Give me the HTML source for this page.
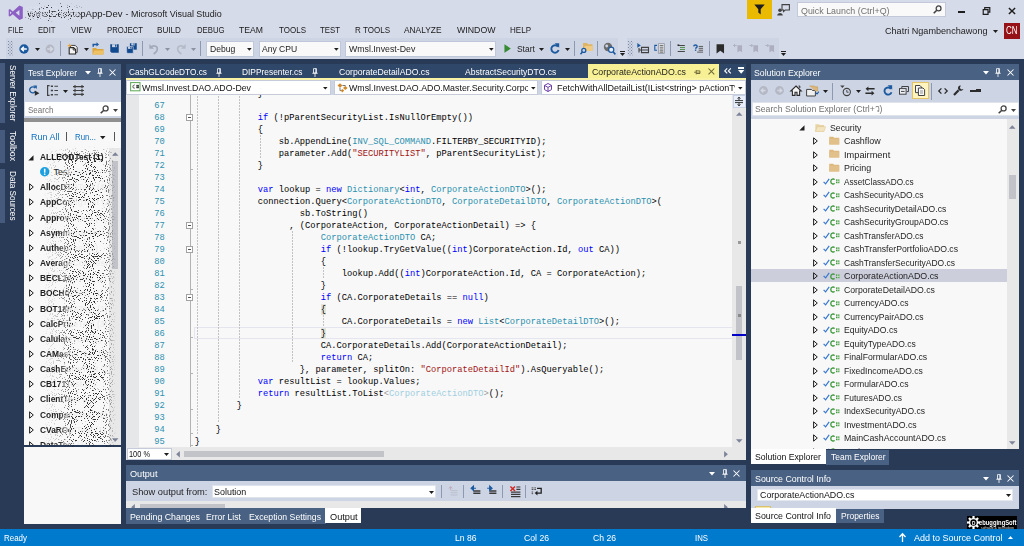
<!DOCTYPE html>
<html lang="en">
<head>
<meta charset="utf-8">
<title>WmslDesktopApp-Dev - Microsoft Visual Studio</title>
<style>
*{box-sizing:border-box;margin:0;padding:0}
html,body{width:1024px;height:546px;overflow:hidden}
body{position:relative;background:#293a57;font-family:"Liberation Sans",sans-serif;font-size:9px;color:#1e1e1e;line-height:1}
.abs{position:absolute}
svg{overflow:visible}
.t{position:absolute;white-space:pre;line-height:12px;height:12px;transform-origin:0 50%}
#top{left:0;top:0;width:1024px;height:59px;background:#d6dbe9}
#status{left:0;top:529px;width:1024px;height:17px;background:#007acc;color:#fff}
.grip{background-image:radial-gradient(circle at 0.6px 0.6px,#7c88a0 0.6px,transparent 0.7px),radial-gradient(circle at 0.6px 0.6px,#7c88a0 0.6px,transparent 0.7px);background-size:3px 3px,3px 3px;background-position:0 0,1.5px 1.5px}
.vt{position:absolute;writing-mode:vertical-rl;white-space:nowrap;color:#fff;font-size:9px;line-height:12px;width:12px;transform-origin:50% 0}
.hd{position:absolute;background:#496182;height:16px}
.tbar{position:absolute;background:#cdd4e4}
.pane{position:absolute;background:#f8f8f8}
.cl{position:absolute;left:0;white-space:pre;font-family:"Liberation Mono",monospace;font-size:8.75px;line-height:12px;height:12px;color:#000}
.k{color:#0000ff}.y{color:#2b91af}.s{color:#a31515}.f{color:#9a9a9a}.fy{color:#9fcfdf}
.ln{position:absolute;left:0;width:38.8px;text-align:right;font-family:"Liberation Mono",monospace;font-size:8.75px;line-height:12px;height:12px;color:#2b91af}
.ig{position:absolute;width:1px;background:repeating-linear-gradient(180deg,#c2c2c2 0,#c2c2c2 1.8px,transparent 1.8px,transparent 3px)}
.ob{position:absolute;width:7.4px;height:7px;border:1px solid #a2a2a2;background:#fff}
.ob:after{content:"";position:absolute;left:1px;top:2px;width:3px;height:1px;background:#555}
.cb{position:absolute;background:#fff;border:1px solid #c5cbd9;height:14.7px}
</style>
</head>
<body>
<div id="top" class="abs">
<div class="abs" style="left:6px;top:38px;width:786px;height:21px;background:#cdd4e4"></div>
<svg class="abs" style="left:8px;top:5px" width="16" height="16" viewBox="0 0 16 16"><path d="M11.4 0.6 L14.8 2 V13.6 L11.4 15 L4.8 9.2 L1.9 11.5 L0.7 10.9 V4.7 L1.9 4.1 L4.8 6.4 Z M11.4 4.9 L7.7 7.8 L11.4 10.7 Z M2 6.3 V9.3 L3.6 7.8 Z" fill="#8c5fc4" fill-rule="evenodd"/></svg>
<div class="t" style='left:27px;top:6.7px;line-height:14px;height:14px;font-size:9.6px;color:#1b1b1b;transform:scaleX(0.9896);'>WmslDesktopApp-Dev</div>
<div class="t" style='left:123.3px;top:6.7px;line-height:14px;height:14px;font-size:9.6px;color:#1b1b1b;transform:scaleX(0.9317);'> - Microsoft Visual Studio</div>
<svg class="abs" style="left:25px;top:3px" width="62" height="20" viewBox="0 0 62 20"><defs>
<filter id="nzl" x="0" y="0" width="100%" height="100%" color-interpolation-filters="sRGB"><feTurbulence type="fractalNoise" baseFrequency="0.9" numOctaves="1" seed="5"/><feColorMatrix values="0 0 0 0 0.86  0 0 0 0 0.88  0 0 0 0 0.93  0 0 0 -24 12.4"/></filter>
<filter id="nzd" x="0" y="0" width="100%" height="100%" color-interpolation-filters="sRGB"><feTurbulence type="fractalNoise" baseFrequency="0.9" numOctaves="1" seed="23"/><feColorMatrix values="0 0 0 0 0.15  0 0 0 0 0.15  0 0 0 0 0.2  0 0 0 -24 7.9"/></filter>
<radialGradient id="tmg" cx="0.42" cy="0.5" r="0.62"><stop offset="0" stop-color="#fff"/><stop offset="0.7" stop-color="#ccc"/><stop offset="1" stop-color="#000"/></radialGradient>
<mask id="tm"><rect width="62" height="20" fill="url(#tmg)"/></mask></defs>
<g mask="url(#tm)"><rect x="0" y="3" width="56" height="14" filter="url(#nzl)"/><rect width="62" height="20" filter="url(#nzd)"/></g></svg>
<div class="abs" style="left:747px;top:0;width:25px;height:19px;background:#e9ba00"></div>
<svg class="abs" style="left:754px;top:4px" width="11" height="11" viewBox="0 0 11 11"><path d="M0.3 0.5 H10.7 L6.7 5.2 V10.5 L4.3 8.6 V5.2 Z" fill="#1e1e1e"/></svg>
<svg class="abs" style="left:777px;top:4px" width="13" height="12" viewBox="0 0 13 12"><path d="M5 0.6 H12.4 V6 H8.2 L6.5 7.6 V6 H5 Z" fill="#d6dbe9" stroke="#424242" stroke-width="1.1"/><circle cx="3" cy="6.2" r="1.8" fill="#424242"/><path d="M0.2 11.6 C0.2 8.2 5.8 8.2 5.8 11.6 Z" fill="#424242"/></svg>
<div class="abs" style="left:796.5px;top:1.7px;width:149.5px;height:15.7px;background:#f9f9fa;border:1px solid #c3c9d8"></div>
<div class="t" style='left:801px;top:4.6px;color:#717171;transform:scaleX(0.9857);'>Quick Launch (Ctrl+Q)</div>
<svg class="abs" style="left:933px;top:5px" width="9" height="9" viewBox="0 0 10 10"><circle cx="6.2" cy="3.8" r="2.7" fill="none" stroke="#424242" stroke-width="1.4"/><path d="M4.2 5.8 L0.8 9.2" stroke="#424242" stroke-width="1.8"/></svg>
<div class="abs" style="left:957.5px;top:11.3px;width:7px;height:2px;background:#1e1e1e"></div>
<svg class="abs" style="left:982px;top:6.5px" width="9" height="8" viewBox="0 0 10 10"><path d="M2.8 2.6 V0.9 H9.1 V6.4 H7.3 M0.9 3.2 H6.9 V9.1 H0.9 Z" fill="none" stroke="#1e1e1e" stroke-width="1.5"/></svg>
<svg class="abs" style="left:1007.5px;top:7px" width="8" height="8" viewBox="0 0 9 9"><path d="M1 1 L8 8 M8 1 L1 8" stroke="#1e1e1e" stroke-width="1.6"/></svg>
<div class="t" style='left:8px;top:24.2px;font-size:9.2px;color:#1b1b1b;transform:scaleX(0.7987);'>FILE</div>
<div class="t" style='left:38px;top:24.2px;font-size:9.2px;color:#1b1b1b;transform:scaleX(0.8358);'>EDIT</div>
<div class="t" style='left:71px;top:24.2px;font-size:9.2px;color:#1b1b1b;transform:scaleX(0.8729);'>VIEW</div>
<div class="t" style='left:106.5px;top:24.2px;font-size:9.2px;color:#1b1b1b;transform:scaleX(0.8393);'>PROJECT</div>
<div class="t" style='left:157px;top:24.2px;font-size:9.2px;color:#1b1b1b;transform:scaleX(0.8868);'>BUILD</div>
<div class="t" style='left:196.5px;top:24.2px;font-size:9.2px;color:#1b1b1b;transform:scaleX(0.8413);'>DEBUG</div>
<div class="t" style='left:239px;top:24.2px;font-size:9.2px;color:#1b1b1b;transform:scaleX(0.9400);'>TEAM</div>
<div class="t" style='left:278.5px;top:24.2px;font-size:9.2px;color:#1b1b1b;transform:scaleX(0.8714);'>TOOLS</div>
<div class="t" style='left:320px;top:24.2px;font-size:9.2px;color:#1b1b1b;transform:scaleX(0.8516);'>TEST</div>
<div class="t" style='left:354.5px;top:24.2px;font-size:9.2px;color:#1b1b1b;transform:scaleX(0.8750);'>R TOOLS</div>
<div class="t" style='left:404px;top:24.2px;font-size:9.2px;color:#1b1b1b;transform:scaleX(0.9105);'>ANALYZE</div>
<div class="t" style='left:456.5px;top:24.2px;font-size:9.2px;color:#1b1b1b;transform:scaleX(0.9550);'>WINDOW</div>
<div class="t" style='left:510px;top:24.2px;font-size:9.2px;color:#1b1b1b;transform:scaleX(0.8744);'>HELP</div>
<div class="t" style='left:884.5px;top:25px;transform:scaleX(1.0092);'>Chatri Ngambenchawong</div>
<svg class="abs" style="left:993px;top:30px" width="5" height="3" viewBox="0 0 5 3"><path d="M0 0 H5 L2.5 3 Z" fill="#1e1e1e"/></svg>
<div class="abs" style="left:1004px;top:23px;width:16px;height:16px;background:#951216"></div>
<div class="t" style='left:1006px;top:25px;font-size:10px;color:#fff;transform:scaleX(0.7957);'>CN</div>
<div class="abs grip" style="left:8.2px;top:41px;width:4.5px;height:15px"></div>
<svg class="abs" style="left:19px;top:43.5px" width="10" height="10" viewBox="0 0 10 10"><circle cx="5" cy="5" r="4.7" fill="#1c5aa0"/><path d="M7.8 5 H3 M4.9 2.7 L2.5 5 L4.9 7.3" stroke="#fff" stroke-width="1.5" fill="none"/></svg>
<svg class="abs" style="left:34.5px;top:47.5px" width="5" height="3" viewBox="0 0 5 3"><path d="M0 0 H5 L2.5 3 Z" fill="#1e1e1e"/></svg>
<svg class="abs" style="left:44.5px;top:43.5px" width="10" height="10" viewBox="0 0 10 10"><circle cx="5" cy="5" r="4.4" fill="#b4b8c4"/><path d="M2.2 5 H7 M5.1 2.7 L7.5 5 L5.1 7.3" stroke="#d3d8e4" stroke-width="1.5" fill="none"/></svg>
<div class="abs" style="left:60px;top:41px;width:1px;height:15px;background:#8d99b0"></div>
<svg class="abs" style="left:67px;top:42.5px" width="11" height="12" viewBox="0 0 11 12"><path d="M3.6 2.4 H8.2 L10.2 4.4 V9.4 H3.6 Z" fill="#f4f4f4" stroke="#424242" stroke-width="1"/><path d="M2.2 4.6 H6.6 L8.6 6.6 V11 H2.2 Z" fill="#f4f4f4" stroke="#2b2b2b" stroke-width="1.1"/><path d="M6.2 4.6 V7 H8.6" fill="none" stroke="#2b2b2b" stroke-width="0.9"/><path d="M2.5 0.2 L3.2 1.9 L5 2.5 L3.2 3.2 L2.5 5 L1.9 3.2 L0 2.5 L1.9 1.9 Z" fill="#e9a53a"/></svg>
<svg class="abs" style="left:83.5px;top:47.5px" width="5" height="3" viewBox="0 0 5 3"><path d="M0 0 H5 L2.5 3 Z" fill="#1e1e1e"/></svg>
<svg class="abs" style="left:92px;top:41.5px" width="12" height="13" viewBox="0 0 12 13"><path d="M0.5 6 H4 L5 7 H11.5 V12.5 H0.5 Z" fill="#dda63c"/><path d="M2.4 8.4 H11.8 L10.6 12.5 H0.5 Z" fill="#efc165"/><path d="M1.2 4.8 V2.4 H5.2" fill="none" stroke="#1c5aa0" stroke-width="1.5"/><path d="M4.5 0.3 L7 2.4 L4.5 4.5 Z" fill="#1c5aa0"/></svg>
<svg class="abs" style="left:110.2px;top:44px" width="9" height="9" viewBox="0 0 10 10"><path d="M0.3 0.3 H9.7 V9.7 H1.8 L0.3 8.2 Z" fill="#114a8e"/><rect x="2.3" y="0.3" width="5.2" height="3.2" fill="#cdd4e4"/><rect x="5.6" y="0.8" width="1.2" height="2.2" fill="#114a8e"/></svg>
<svg class="abs" style="left:125.8px;top:43px" width="11.4" height="10.6" viewBox="0 0 13 13"><path d="M4.3 0.3 H12.7 V8.2 H4.3 Z" fill="#114a8e"/><rect x="6" y="0.3" width="4.6" height="2.6" fill="#cdd4e4"/><rect x="8.8" y="0.6" width="1.1" height="1.9" fill="#114a8e"/><path d="M0.3 4.4 H8.4 V12.7 H1.6 L0.3 11.4 Z" fill="#114a8e" stroke="#cdd4e4" stroke-width="0.8"/><rect x="2" y="4.6" width="4.4" height="2.6" fill="#cdd4e4"/><rect x="4.7" y="4.9" width="1.1" height="1.9" fill="#114a8e"/></svg>
<div class="abs" style="left:142px;top:41px;width:1px;height:15px;background:#8d99b0"></div>
<svg class="abs" style="left:149px;top:42.5px" width="10" height="12" viewBox="0 0 10 12"><path d="M1.5 4.6 C4 1.8 8.6 2.6 8.3 6.2 C8.1 8.3 6.6 9.8 4.6 11" fill="none" stroke="#a3a9b8" stroke-width="1.6"/><path d="M0.4 1 V5.8 H5 Z" fill="#a3a9b8"/></svg>
<svg class="abs" style="left:164.5px;top:47.5px" width="5" height="3" viewBox="0 0 5 3"><path d="M0 0 H5 L2.5 3 Z" fill="#8b91a0"/></svg>
<svg class="abs" style="left:176px;top:42.5px" width="10" height="12" viewBox="0 0 10 12"><path d="M8.5 4.6 C6 1.8 1.4 2.6 1.7 6.2 C1.9 8.3 3.4 9.8 5.4 11" fill="none" stroke="#b5bac7" stroke-width="1.6"/><path d="M9.6 1 V5.8 H5 Z" fill="#b5bac7"/></svg>
<svg class="abs" style="left:191px;top:47.5px" width="5" height="3" viewBox="0 0 5 3"><path d="M0 0 H5 L2.5 3 Z" fill="#8b91a0"/></svg>
<div class="abs" style="left:200px;top:41px;width:1px;height:15px;background:#8d99b0"></div>
<div class="abs" style="left:206.2px;top:40.5px;width:48.2px;height:16px;background:#f9f9fa;border:0.8px solid #bfc8db"></div>
<div class="t" style='left:209.7px;top:42.9px;transform:scaleX(0.9536);'>Debug</div>
<svg class="abs" style="left:247.2px;top:47.9px" width="4.7" height="2.7" viewBox="0 0 4.7 2.7"><path d="M0 0 H4.7 L2.35 2.7 Z" fill="#1e1e1e"/></svg>
<div class="abs" style="left:258.6px;top:40.5px;width:82.6px;height:16px;background:#f9f9fa;border:0.8px solid #bfc8db"></div>
<div class="t" style='left:262.3px;top:42.9px;transform:scaleX(0.9509);'>Any CPU</div>
<svg class="abs" style="left:334.00000000000006px;top:47.9px" width="4.7" height="2.7" viewBox="0 0 4.7 2.7"><path d="M0 0 H4.7 L2.35 2.7 Z" fill="#1e1e1e"/></svg>
<div class="abs" style="left:345.2px;top:40.5px;width:151px;height:16px;background:#f9f9fa;border:0.8px solid #bfc8db"></div>
<div class="t" style='left:348.5px;top:42.9px;transform:scaleX(0.9748);'>Wmsl.Invest-Dev</div>
<svg class="abs" style="left:489.0px;top:47.9px" width="4.7" height="2.7" viewBox="0 0 4.7 2.7"><path d="M0 0 H4.7 L2.35 2.7 Z" fill="#1e1e1e"/></svg>
<svg class="abs" style="left:503.5px;top:44px" width="7.2" height="9.2" viewBox="0 0 8 10"><path d="M0.5 0.3 L7.6 5 L0.5 9.7 Z" fill="#368b33"/></svg>
<div class="t" style='left:517px;top:42.5px;transform:scaleX(0.9361);'>Start</div>
<svg class="abs" style="left:538.5px;top:47.5px" width="5" height="3" viewBox="0 0 5 3"><path d="M0 0 H5 L2.5 3 Z" fill="#1e1e1e"/></svg>
<svg class="abs" style="left:550px;top:42.5px" width="10" height="11" viewBox="0 0 10 11"><path d="M7.9 3.6 A3.7 3.7 0 1 0 8.6 7" fill="none" stroke="#1c5aa0" stroke-width="1.9"/><path d="M4.6 0.2 H9.2 V4.8 Z" fill="#1c5aa0"/></svg>
<svg class="abs" style="left:565px;top:47.5px" width="5" height="3" viewBox="0 0 5 3"><path d="M0 0 H5 L2.5 3 Z" fill="#1e1e1e"/></svg>
<div class="abs" style="left:574px;top:41px;width:1px;height:15px;background:#8d99b0"></div>
<svg class="abs" style="left:580px;top:42px" width="13" height="13" viewBox="0 0 13 13"><path d="M3 1 H7 L8 2.2 H12.5 V9 H3 Z" fill="#dfb462"/><path d="M4.6 4 H12.5 V9 H3 Z" fill="#efcb85"/><circle cx="3.8" cy="8.4" r="2" fill="#cdd4e4" stroke="#1c5aa0" stroke-width="1.3"/><path d="M2.4 9.9 L0.5 12.2" stroke="#1c5aa0" stroke-width="1.5"/></svg>
<div class="abs" style="left:597px;top:41px;width:1px;height:15px;background:#8d99b0"></div>
<svg class="abs" style="left:603px;top:42px" width="13" height="13" viewBox="0 0 13 13"><circle cx="5" cy="5" r="4.2" fill="#6b6b6b"/><circle cx="3.7" cy="4" r="1.4" fill="#cdd4e4"/><circle cx="8.2" cy="7.8" r="2.6" fill="#e8edf6" stroke="#1c5aa0" stroke-width="1.2"/><path d="M10 9.8 L12.4 12.4" stroke="#1c5aa0" stroke-width="1.6"/></svg>
<div class="abs" style="left:618px;top:38px;width:9px;height:21px;background:#d6dbe9"></div>
<div class="abs" style="left:620px;top:50.5px;width:5px;height:1px;background:#1e1e1e"></div>
<svg class="abs" style="left:620px;top:53px" width="5" height="3" viewBox="0 0 5 3"><path d="M0 0 H5 L2.5 3 Z" fill="#1e1e1e"/></svg>
<div class="abs grip" style="left:628.2px;top:41px;width:4.5px;height:15px"></div>
<svg class="abs" style="left:637px;top:43px" width="12" height="11" viewBox="0 0 12 11"><path d="M0.3 0 L3.8 2.4 L0.3 4.8 Z" fill="#1c5aa0"/><path d="M2 5 V9.5 M2 7 H11.5 M4.5 4.4 H11.5 V9.6 H4.5 Z" fill="none" stroke="#424242" stroke-width="1.1"/></svg>
<svg class="abs" style="left:654px;top:43px" width="11" height="11" viewBox="0 0 11 11"><path d="M4.4 0.6 H10.4 V10.4 H4.4 Z" fill="#eef1f7" stroke="#8a8f9c" stroke-width="0.8"/><path d="M5.6 2.4 H9.4 M5.6 4.2 H9.4 M5.6 6 H9.4 M5.6 7.8 H9.4 M5.6 9.2 H9.4" stroke="#6a6a6a" stroke-width="1"/><path d="M3 2.4 H0.8 V7.2 H3" fill="none" stroke="#1c5aa0" stroke-width="1.1"/></svg>
<div class="abs" style="left:669.5px;top:41px;width:1px;height:15px;background:#8d99b0"></div>
<svg class="abs" style="left:677.3px;top:44.6px" width="8.4" height="7.2" viewBox="0 0 9 8"><path d="M0.6 0.6 H8.6 M3.4 2.8 H8.6 M3.4 5 H8.6 M0.6 7.2 H8.6" stroke="#424242" stroke-width="1.1"/><path d="M3.4 2.8 H8.6 M3.4 5 H8.6" stroke="#5a9a58" stroke-width="1.1"/><path d="M0.4 0 H2.4" stroke="#1e1e1e" stroke-width="1.2"/></svg>
<svg class="abs" style="left:692.8px;top:44px" width="10.4" height="9" viewBox="0 0 12 10"><path d="M0.8 2.6 C1 0.4 4.8 0.4 4.8 2.6 C4.8 4 3 4 3 5.4" fill="none" stroke="#1c5aa0" stroke-width="1.5"/><rect x="2.2" y="6.2" width="1.6" height="1.5" fill="#1c5aa0"/><path d="M6.6 2.6 H11.6 M6.6 4.8 H11.6 M6.6 7 H11.6 M4.8 9.2 H11.6" stroke="#555" stroke-width="1.1"/></svg>
<div class="abs" style="left:708.5px;top:41px;width:1px;height:15px;background:#8d99b0"></div>
<svg class="abs" style="left:716px;top:43.6px" width="8.6" height="9.8" viewBox="0 0 9 11"><path d="M0.3 0.2 H8.7 V10.6 L4.5 7.6 L0.3 10.6 Z" fill="#2b2b2b"/></svg>
<svg class="abs" style="left:733.2px;top:43.4px" width="9.4" height="10" viewBox="0 0 11 11"><path d="M5.2 2.4 H10.6 V10.8 L7.9 8.6 L5.2 10.8 Z" fill="#adafc0"/><path d="M4.4 2.6 H0.8 M2.4 0.8 L0.6 2.6 L2.4 4.4" fill="none" stroke="#adafc0" stroke-width="1.1"/></svg>
<svg class="abs" style="left:749.2px;top:43.4px" width="9.4" height="10" viewBox="0 0 11 11"><path d="M5.2 2.4 H10.6 V10.8 L7.9 8.6 L5.2 10.8 Z" fill="#adafc0"/><path d="M0.4 2.6 H4.2 M2.6 0.8 L4.4 2.6 L2.6 4.4" fill="none" stroke="#adafc0" stroke-width="1.1"/></svg>
<svg class="abs" style="left:765.2px;top:43.4px" width="9.4" height="10" viewBox="0 0 11 11"><path d="M5.2 2.4 H10.6 V10.8 L7.9 8.6 L5.2 10.8 Z" fill="#adafc0"/><path d="M0.4 2.6 H4.2 M2.6 0.8 L4.4 2.6 L2.6 4.4" fill="none" stroke="#adafc0" stroke-width="1.1"/></svg>
<div class="abs" style="left:779px;top:38px;width:13px;height:21px;background:#d6dbe9"></div>
<div class="abs" style="left:781px;top:50.5px;width:5px;height:1px;background:#1e1e1e"></div>
<svg class="abs" style="left:781px;top:53px" width="5" height="3" viewBox="0 0 5 3"><path d="M0 0 H5 L2.5 3 Z" fill="#1e1e1e"/></svg>
</div>
<div class="abs" style="left:0;top:63px;width:4.5px;height:60px;background:#465a7d"></div>
<div class="abs" style="left:0;top:129.5px;width:4.5px;height:33.5px;background:#465a7d"></div>
<div class="abs" style="left:0;top:169px;width:4.5px;height:53.5px;background:#465a7d"></div>
<div class="vt" style="left:6.8px;top:64.8px;transform:scaleY(0.9035)">Server Explorer</div>
<div class="vt" style="left:6.8px;top:131.3px;transform:scaleY(0.9668)">Toolbox</div>
<div class="vt" style="left:6.8px;top:171.3px;transform:scaleY(0.9077)">Data Sources</div>
<div class="hd" style="left:24px;top:64px;width:97px"></div>
<div class="t" style='left:27.5px;top:66.6px;color:#fff;transform:scaleX(0.9328);'>Test Explorer</div>
<svg class="abs" style="left:84.5px;top:71.0px" width="6" height="3.5" viewBox="0 0 6 3.5"><path d="M0 0 H6 L3.0 3.5 Z" fill="#fff"/></svg>
<svg class="abs" style="left:97.0px;top:68.0px" width="6" height="9" viewBox="0 0 6 9"><path d="M1.5 0.6 H4.4 V5 H1.5 Z M0.3 5.3 H5.7 M3 5.3 V9" fill="none" stroke="#fff" stroke-width="0.8"/><path d="M3.9 0.6 V5" stroke="#fff" stroke-width="0.9"/></svg>
<svg class="abs" style="left:108.5px;top:69.0px" width="7" height="7" viewBox="0 0 7 7"><path d="M0.5 0.5 L6.5 6.5 M6.5 0.5 L0.5 6.5" stroke="#fff" stroke-width="1.05"/></svg>
<div class="tbar" style="left:24px;top:80px;width:97px;height:42px"></div>
<svg class="abs" style="left:29px;top:85px" width="11" height="11" viewBox="0 0 11 11"><path d="M6.2 3.2 A3 3 0 1 0 6.4 6.2" fill="none" stroke="#1c5aa0" stroke-width="1.35"/><path d="M4.2 0.4 H7.8 V4 Z" fill="#1c5aa0"/><path d="M5.8 5.6 L10.4 8.2 L5.8 10.8 Z" fill="#2b2b2b"/></svg>
<svg class="abs" style="left:47px;top:85px" width="11" height="11" viewBox="0 0 11 11"><path d="M2.6 0.6 H0.6 V10.4 H2.6" fill="none" stroke="#424242" stroke-width="1.2"/><path d="M3.8 1.2 H6 M3.8 5.5 H6 M3.8 9.8 H6" stroke="#424242" stroke-width="1.6"/><path d="M7.4 1.2 H11 M7.4 5.5 H11 M7.4 9.8 H11" stroke="#424242" stroke-width="1.1"/></svg>
<svg class="abs" style="left:62.5px;top:89.5px" width="5" height="3" viewBox="0 0 5 3"><path d="M0 0 H5 L2.5 3 Z" fill="#1e1e1e"/></svg>
<svg class="abs" style="left:72.5px;top:85px" width="11" height="11" viewBox="0 0 11 11"><path d="M0 1.6 H11 M0 5.5 H11 M0 9.4 H11" stroke="#424242" stroke-width="1.1"/><path d="M2 0 V3.2 M9 0 V3.2 M2 7.8 V11 M9 7.8 V11 M2 4 V7 M9 4 V7" stroke="#424242" stroke-width="1.2"/></svg>
<div class="abs" style="left:24.5px;top:102.3px;width:96px;height:13.8px;background:#fff"></div>
<div class="t" style='left:28px;top:103.7px;color:#717171;transform:scaleX(0.8938);'>Search</div>
<svg class="abs" style="left:100px;top:105px" width="9" height="9" viewBox="0 0 9 9"><circle cx="5.6" cy="3.4" r="2.5" fill="none" stroke="#424242" stroke-width="1.3"/><path d="M3.8 5.2 L0.7 8.3" stroke="#424242" stroke-width="1.6"/></svg>
<svg class="abs" style="left:112.5px;top:109px" width="5" height="3" viewBox="0 0 5 3"><path d="M0 0 H5 L2.5 3 Z" fill="#424242"/></svg>
<div class="abs" style="left:24px;top:118.4px;width:97px;height:4.4px;background:#909090"></div>
<div class="pane" style="left:24px;top:122px;width:97px;height:323px;overflow:hidden" id="tl">
</div>
<div class="t" style='left:31px;top:131px;font-size:9.2px;color:#0e70c0;transform:scaleX(0.9785);'>Run All</div>
<div class="abs" style="left:66px;top:132px;width:1px;height:9px;background:#555"></div>
<div class="t" style='left:74.5px;top:131px;font-size:9.2px;color:#0e70c0;transform:scaleX(0.8566);'>Run...</div>
<svg class="abs" style="left:100px;top:136px" width="5.5" height="3.2" viewBox="0 0 5.5 3.2"><path d="M0 0 H5.5 L2.75 3.2 Z" fill="#1e1e1e"/></svg>
<div class="abs" style="left:114px;top:132px;width:1px;height:9px;background:#555"></div>
<div class="abs" style="left:24px;top:148px;width:84.5px;height:297px;overflow:hidden">
<svg class="abs" style="left:4px;top:6.5px" width="6" height="6" viewBox="0 0 6 6"><path d="M5.5 0.3 V5.5 H0.3 Z" fill="#1e1e1e"/></svg>
<div class="t" style='left:15.8px;top:3px;font-weight:700;transform:scaleX(0.9300);'>ALLEODTest (1)</div>
<svg class="abs" style="left:16px;top:19.45px" width="9.4" height="9.4" viewBox="0 0 10 10"><circle cx="5" cy="5" r="5" fill="#1ba1e2"/><rect x="4.2" y="1.8" width="1.6" height="4.2" fill="#fff"/><rect x="4.2" y="6.9" width="1.6" height="1.5" fill="#fff"/></svg>
<div class="t" style='left:29.5px;top:18.45px;'>TestAlleod</div>
<svg class="abs" style="left:5px;top:35.30000000000001px" width="5" height="8" viewBox="0 0 5 8"><path d="M0.6 0.8 L4.3 4 L0.6 7.2 Z" fill="none" stroke="#1e1e1e" stroke-width="1"/></svg>
<div class="t" style='left:15.8px;top:33.3px;font-weight:700;transform:scaleX(0.9300);'>AllocDTOTest (4)</div>
<svg class="abs" style="left:5px;top:50.44999999999999px" width="5" height="8" viewBox="0 0 5 8"><path d="M0.6 0.8 L4.3 4 L0.6 7.2 Z" fill="none" stroke="#1e1e1e" stroke-width="1"/></svg>
<div class="t" style='left:15.8px;top:48.45px;font-weight:700;transform:scaleX(0.9300);'>AppConfigTest (2)</div>
<svg class="abs" style="left:5px;top:65.6px" width="5" height="8" viewBox="0 0 5 8"><path d="M0.6 0.8 L4.3 4 L0.6 7.2 Z" fill="none" stroke="#1e1e1e" stroke-width="1"/></svg>
<div class="t" style='left:15.8px;top:63.6px;font-weight:700;transform:scaleX(0.9300);'>ApprovalTest (3)</div>
<svg class="abs" style="left:5px;top:80.75px" width="5" height="8" viewBox="0 0 5 8"><path d="M0.6 0.8 L4.3 4 L0.6 7.2 Z" fill="none" stroke="#1e1e1e" stroke-width="1"/></svg>
<div class="t" style='left:15.8px;top:78.75px;font-weight:700;transform:scaleX(0.9300);'>AsymmetricTest (1)</div>
<svg class="abs" style="left:5px;top:95.9px" width="5" height="8" viewBox="0 0 5 8"><path d="M0.6 0.8 L4.3 4 L0.6 7.2 Z" fill="none" stroke="#1e1e1e" stroke-width="1"/></svg>
<div class="t" style='left:15.8px;top:93.9px;font-weight:700;transform:scaleX(0.9300);'>AuthenTest (5)</div>
<svg class="abs" style="left:5px;top:111.05000000000001px" width="5" height="8" viewBox="0 0 5 8"><path d="M0.6 0.8 L4.3 4 L0.6 7.2 Z" fill="none" stroke="#1e1e1e" stroke-width="1"/></svg>
<div class="t" style='left:15.8px;top:109.05px;font-weight:700;transform:scaleX(0.9300);'>AverageCostTest (2)</div>
<svg class="abs" style="left:5px;top:126.19999999999999px" width="5" height="8" viewBox="0 0 5 8"><path d="M0.6 0.8 L4.3 4 L0.6 7.2 Z" fill="none" stroke="#1e1e1e" stroke-width="1"/></svg>
<div class="t" style='left:15.8px;top:124.2px;font-weight:700;transform:scaleX(0.9300);'>BECL16ATest (1)</div>
<svg class="abs" style="left:5px;top:141.35000000000002px" width="5" height="8" viewBox="0 0 5 8"><path d="M0.6 0.8 L4.3 4 L0.6 7.2 Z" fill="none" stroke="#1e1e1e" stroke-width="1"/></svg>
<div class="t" style='left:15.8px;top:139.35px;font-weight:700;transform:scaleX(0.9300);'>BOCH01Test (1)</div>
<svg class="abs" style="left:5px;top:156.5px" width="5" height="8" viewBox="0 0 5 8"><path d="M0.6 0.8 L4.3 4 L0.6 7.2 Z" fill="none" stroke="#1e1e1e" stroke-width="1"/></svg>
<div class="t" style='left:15.8px;top:154.5px;font-weight:700;transform:scaleX(0.9300);'>BOT18NATest (1)</div>
<svg class="abs" style="left:5px;top:171.64999999999998px" width="5" height="8" viewBox="0 0 5 8"><path d="M0.6 0.8 L4.3 4 L0.6 7.2 Z" fill="none" stroke="#1e1e1e" stroke-width="1"/></svg>
<div class="t" style='left:15.8px;top:169.65px;font-weight:700;transform:scaleX(0.9300);'>CalcPriceTest (3)</div>
<svg class="abs" style="left:5px;top:186.8px" width="5" height="8" viewBox="0 0 5 8"><path d="M0.6 0.8 L4.3 4 L0.6 7.2 Z" fill="none" stroke="#1e1e1e" stroke-width="1"/></svg>
<div class="t" style='left:15.8px;top:184.8px;font-weight:700;transform:scaleX(0.9300);'>CalulateTest (2)</div>
<svg class="abs" style="left:5px;top:201.95000000000005px" width="5" height="8" viewBox="0 0 5 8"><path d="M0.6 0.8 L4.3 4 L0.6 7.2 Z" fill="none" stroke="#1e1e1e" stroke-width="1"/></svg>
<div class="t" style='left:15.8px;top:199.95px;font-weight:700;transform:scaleX(0.9300);'>CAMasterTest (1)</div>
<svg class="abs" style="left:5px;top:217.10000000000002px" width="5" height="8" viewBox="0 0 5 8"><path d="M0.6 0.8 L4.3 4 L0.6 7.2 Z" fill="none" stroke="#1e1e1e" stroke-width="1"/></svg>
<div class="t" style='left:15.8px;top:215.1px;font-weight:700;transform:scaleX(0.9300);'>CashEntryTest (2)</div>
<svg class="abs" style="left:5px;top:232.25px" width="5" height="8" viewBox="0 0 5 8"><path d="M0.6 0.8 L4.3 4 L0.6 7.2 Z" fill="none" stroke="#1e1e1e" stroke-width="1"/></svg>
<div class="t" style='left:15.8px;top:230.25px;font-weight:700;transform:scaleX(0.9300);'>CB171Test (1)</div>
<svg class="abs" style="left:5px;top:247.39999999999998px" width="5" height="8" viewBox="0 0 5 8"><path d="M0.6 0.8 L4.3 4 L0.6 7.2 Z" fill="none" stroke="#1e1e1e" stroke-width="1"/></svg>
<div class="t" style='left:15.8px;top:245.4px;font-weight:700;transform:scaleX(0.9300);'>ClientTest (4)</div>
<svg class="abs" style="left:5px;top:262.55px" width="5" height="8" viewBox="0 0 5 8"><path d="M0.6 0.8 L4.3 4 L0.6 7.2 Z" fill="none" stroke="#1e1e1e" stroke-width="1"/></svg>
<div class="t" style='left:15.8px;top:260.55px;font-weight:700;transform:scaleX(0.9300);'>CompanyTest (2)</div>
<svg class="abs" style="left:5px;top:277.7px" width="5" height="8" viewBox="0 0 5 8"><path d="M0.6 0.8 L4.3 4 L0.6 7.2 Z" fill="none" stroke="#1e1e1e" stroke-width="1"/></svg>
<div class="t" style='left:15.8px;top:275.7px;font-weight:700;transform:scaleX(0.9300);'>CVaROptTest (1)</div>
<svg class="abs" style="left:5px;top:292.85px" width="5" height="8" viewBox="0 0 5 8"><path d="M0.6 0.8 L4.3 4 L0.6 7.2 Z" fill="none" stroke="#1e1e1e" stroke-width="1"/></svg>
<div class="t" style='left:15.8px;top:290.85px;font-weight:700;transform:scaleX(0.9300);'>DataTest (1)</div>
</div>
<div class="abs" style="left:108.5px;top:148px;width:12.5px;height:297px;background:#e8e8e8"></div>
<svg class="abs" style="left:111.5px;top:152px" width="6.5" height="4" viewBox="0 0 7 4"><path d="M0 4 L3.5 0 L7 4 Z" fill="#7d8399"/></svg>
<svg class="abs" style="left:111.5px;top:438px" width="6.5" height="4" viewBox="0 0 7 4"><path d="M0 0 L3.5 4 L7 0 Z" fill="#7d8399"/></svg>
<div class="abs" style="left:111.5px;top:161px;width:6.5px;height:108px;background:#c2c3c9"></div>
<svg class="abs" style="left:40px;top:146px" width="76" height="308" viewBox="0 0 76 308">
<defs><filter id="nz" x="0" y="0" width="100%" height="100%" color-interpolation-filters="sRGB"><feTurbulence type="fractalNoise" baseFrequency="0.95" numOctaves="1" seed="11"/><feColorMatrix values="0 0 0 0 0.08  0 0 0 0 0.08  0 0 0 0 0.08  0 0 0 -24 9.7"/></filter>
<linearGradient id="ng" x1="0" x2="1" y1="0" y2="0"><stop offset="0.04" stop-color="#000"/><stop offset="0.22" stop-color="#444"/><stop offset="0.42" stop-color="#eee"/><stop offset="0.8" stop-color="#fff"/><stop offset="0.92" stop-color="#777"/><stop offset="1" stop-color="#000"/></linearGradient>
<linearGradient id="wg" x1="0" x2="1" y1="0" y2="0"><stop offset="0.24" stop-color="#f8f8f8" stop-opacity="0"/><stop offset="0.42" stop-color="#f8f8f8" stop-opacity="0.95"/><stop offset="0.9" stop-color="#f8f8f8" stop-opacity="0.95"/><stop offset="0.905" stop-color="#f8f8f8" stop-opacity="0"/></linearGradient>
<linearGradient id="ng2" x1="0" x2="0" y1="0" y2="1"><stop offset="0" stop-color="#000"/><stop offset="0.02" stop-color="#888"/><stop offset="0.045" stop-color="#fff"/><stop offset="0.96" stop-color="#fff"/><stop offset="1" stop-color="#000"/></linearGradient>
<mask id="nm"><rect width="76" height="308" fill="url(#ng)"/></mask><mask id="nm2"><rect width="76" height="308" fill="url(#ng2)"/></mask></defs>
<rect x="0" y="18" width="76" height="281" fill="url(#wg)"/>
<g mask="url(#nm2)"><g mask="url(#nm)"><rect width="76" height="308" filter="url(#nz)" opacity="0.88"/></g></g></svg>
<div class="pane" style="left:24px;top:447px;width:97px;height:77px"></div>
<div class="abs" style="left:126px;top:63.8px;width:619.5px;height:14.6px;background:#2f4769"></div>
<div class="t" style='left:129px;top:66px;color:#fff;transform:scaleX(0.9190);'>CashGLCodeDTO.cs</div>
<svg class="abs" style="left:215.5px;top:68px" width="6" height="9" viewBox="0 0 6 9"><path d="M1.5 0.6 H4.4 V5 H1.5 Z M0.3 5.3 H5.7 M3 5.3 V9" fill="none" stroke="#fff" stroke-width="0.8"/><path d="M3.9 0.6 V5" stroke="#fff" stroke-width="0.9"/></svg>
<div class="t" style='left:242px;top:66px;color:#fff;transform:scaleX(0.9303);'>DIPPresenter.cs</div>
<svg class="abs" style="left:311.5px;top:68px" width="6" height="9" viewBox="0 0 6 9"><path d="M1.5 0.6 H4.4 V5 H1.5 Z M0.3 5.3 H5.7 M3 5.3 V9" fill="none" stroke="#fff" stroke-width="0.8"/><path d="M3.9 0.6 V5" stroke="#fff" stroke-width="0.9"/></svg>
<div class="t" style='left:338.5px;top:66px;color:#fff;transform:scaleX(0.9623);'>CorporateDetailADO.cs</div>
<div class="t" style='left:464.75px;top:66px;color:#fff;transform:scaleX(0.9519);'>AbstractSecurityDTO.cs</div>
<div class="abs" style="left:588px;top:63.6px;width:131px;height:15px;background:#f8f094"></div>
<div class="t" style='left:592px;top:66px;transform:scaleX(0.9787);'>CorporateActionADO.cs</div>
<svg class="abs" style="left:693.8px;top:69.6px" width="6.4" height="4.4" viewBox="0 0 7 5"><path d="M0 2.5 H2.4 M2.4 0 V5 M2.6 1 H6.6 V4 H2.6 M2.6 3.5 H6.6" fill="none" stroke="#5f5a30" stroke-width="0.95"/></svg>
<svg class="abs" style="left:707.8px;top:67.8px" width="6.8" height="6.8" viewBox="0 0 6.8 6.8"><path d="M0.5 0.5 L6.3 6.3 M6.3 0.5 L0.5 6.3" stroke="#6b6636" stroke-width="1.05"/></svg>
<svg class="abs" style="left:724.2px;top:68.3px" width="7.6" height="5.8" viewBox="0 0 8 6"><path d="M3.4 0.3 L0.8 3 L3.4 5.7 M7.2 0.3 L4.6 3 L7.2 5.7" fill="none" stroke="#fff" stroke-width="1.2"/></svg>
<div class="abs" style="left:737.6px;top:67.3px;width:6.4px;height:1.3px;background:#fff"></div>
<svg class="abs" style="left:737.6px;top:69.9px" width="6.4" height="3.7" viewBox="0 0 6.4 3.7"><path d="M0 0 H6.4 L3.2 3.7 Z" fill="#fff"/></svg>
<div class="abs" style="left:126px;top:78.2px;width:619.5px;height:1.6px;background:#faf3a4"></div>
<div class="abs" style="left:126px;top:79.8px;width:619.5px;height:15.2px;background:#cdd4e4"></div>
<div class="cb" style="left:126.3px;top:80px;width:204.7px"></div>
<div class="cb" style="left:333.5px;top:80px;width:204.5px"></div>
<div class="cb" style="left:540.5px;top:80px;width:205px"></div>
<svg class="abs" style="left:129.5px;top:82.4px" width="10.6" height="9.4" viewBox="0 0 9 8"><rect x="0.5" y="0.5" width="8" height="7" fill="#fff" stroke="#62aa5e" stroke-width="0.9"/><path d="M4 2.6 C2.2 2 1.8 5.8 4 5.2 M5.4 3.2 H7.6 M5.4 4.6 H7.6 M6 2.4 V5.4 M7 2.4 V5.4" fill="none" stroke="#222" stroke-width="0.7"/></svg>
<div class="t" style='left:142px;top:81.5px;color:#111;transform:scaleX(0.9731);'>Wmsl.Invest.DAO.ADO-Dev</div>
<svg class="abs" style="left:323px;top:86.7px" width="4.6" height="2.6" viewBox="0 0 4.6 2.6"><path d="M0 0 H4.6 L2.3 2.6 Z" fill="#1e1e1e"/></svg>
<svg class="abs" style="left:336.5px;top:82.5px" width="11" height="10" viewBox="0 0 11 10"><path d="M0.5 2.5 L3 0.3 L5.5 2.5 L3 4.7 Z M6 5 L8.3 3 L10.6 5 L8.3 7 Z M3.6 7.6 L5.4 6 L7.2 7.6 L5.4 9.4 Z" fill="#d08a2c"/><path d="M3 4.7 V7.6 H3.8 M5.5 2.5 H8.3 V3.2" fill="none" stroke="#555" stroke-width="0.8"/></svg>
<div class="abs" style="left:349px;top:81.5px;width:179px;height:13px;overflow:hidden">
<div class="t" style='left:0.3px;top:0px;color:#111;transform:scaleX(0.9816);'>Wmsl.Invest.DAO.ADO.Master.Security.CorporateActionADO</div>
</div>
<svg class="abs" style="left:531px;top:86.7px" width="4.6" height="2.6" viewBox="0 0 4.6 2.6"><path d="M0 0 H4.6 L2.3 2.6 Z" fill="#1e1e1e"/></svg>
<svg class="abs" style="left:543.5px;top:83px" width="8" height="9" viewBox="0 0 8 9"><path d="M4 0.5 L7.5 2.4 V6.6 L4 8.5 L0.5 6.6 V2.4 Z M0.5 2.4 L4 4.4 L7.5 2.4 M4 4.4 V8.5" fill="none" stroke="#6a3fa8" stroke-width="1"/></svg>
<div class="abs" style="left:556px;top:81.5px;width:178.5px;height:13px;overflow:hidden">
<div class="t" style='left:0.5px;top:0px;color:#111;transform:scaleX(1.0012);'>FetchWithAllDetailList(IList&lt;string&gt; pActionTypeList)</div>
</div>
<svg class="abs" style="left:738.4px;top:86.7px" width="4.6" height="2.6" viewBox="0 0 4.6 2.6"><path d="M0 0 H4.6 L2.3 2.6 Z" fill="#1e1e1e"/></svg>
<div class="abs" style="left:126px;top:95px;width:606px;height:352px;background:#f8f8f8;overflow:hidden">
<div class="abs" style="left:0;top:0;width:12.5px;height:352px;background:#e6e7e8"></div>
<div class="abs" style="left:67.69999999999999px;top:231.8px;width:540.3px;height:12px;border:1.4px solid #e5e5f0"></div>
<div class="abs" style="left:195.0px;top:208.5px;width:5.25px;height:11px;background:#e4e4d8"></div>
<div class="abs" style="left:195.0px;top:232.5px;width:5.25px;height:11px;background:#e4e4d8"></div>
<div class="abs" style="left:63.80000000000001px;top:0;width:1px;height:352px;background:#b2b2b2"></div>
<div class="ob" style="left:60px;top:18.5px"></div>
<div class="ob" style="left:60px;top:126.5px"></div>
<div class="ob" style="left:60px;top:150.5px"></div>
<div class="ob" style="left:60px;top:198.5px"></div>
<div class="abs" style="left:64px;top:74px;width:3px;height:1px;background:#b2b2b2"></div>
<div class="abs" style="left:64px;top:278px;width:3px;height:1px;background:#b2b2b2"></div>
<div class="abs" style="left:64px;top:194px;width:3px;height:1px;background:#b2b2b2"></div>
<div class="abs" style="left:64px;top:242px;width:3px;height:1px;background:#b2b2b2"></div>
<div class="abs" style="left:64px;top:314px;width:3px;height:1px;background:#b2b2b2"></div>
<div class="abs" style="left:64px;top:338px;width:3px;height:1px;background:#b2b2b2"></div>
<div class="abs" style="left:64px;top:350px;width:3px;height:1px;background:#b2b2b2"></div>
<div class="ig" style="left:71px;top:-8px;height:348px"></div>
<div class="ig" style="left:92px;top:-8px;height:336px"></div>
<div class="ig" style="left:113px;top:-8px;height:312px"></div>
<div class="ig" style="left:134px;top:40px;height:24px"></div>
<div class="ig" style="left:165.5px;top:136px;height:132px"></div>
<div class="ig" style="left:197px;top:172px;height:12px"></div>
<div class="ig" style="left:197px;top:220px;height:12px"></div>
<div class="ln" style="top:5px">67</div>
<div class="ln" style="top:17px">68</div>
<div class="ln" style="top:29px">69</div>
<div class="ln" style="top:41px">70</div>
<div class="ln" style="top:53px">71</div>
<div class="ln" style="top:65px">72</div>
<div class="ln" style="top:77px">73</div>
<div class="ln" style="top:89px">74</div>
<div class="ln" style="top:101px">75</div>
<div class="ln" style="top:113px">76</div>
<div class="ln" style="top:125px">77</div>
<div class="ln" style="top:137px">78</div>
<div class="ln" style="top:149px">79</div>
<div class="ln" style="top:161px">80</div>
<div class="ln" style="top:173px">81</div>
<div class="ln" style="top:185px">82</div>
<div class="ln" style="top:197px">83</div>
<div class="ln" style="top:209px">84</div>
<div class="ln" style="top:221px">85</div>
<div class="ln" style="top:233px">86</div>
<div class="ln" style="top:245px">87</div>
<div class="ln" style="top:257px">88</div>
<div class="ln" style="top:269px">89</div>
<div class="ln" style="top:281px">90</div>
<div class="ln" style="top:293px">91</div>
<div class="ln" style="top:305px">92</div>
<div class="ln" style="top:317px">93</div>
<div class="ln" style="top:329px">94</div>
<div class="ln" style="top:341px">95</div>
<div class="cl" style="left:68.7px;top:-7px">            }</div>
<div class="cl" style="left:68.7px;top:17px">            <span class="k">if</span> (!pParentSecurityList.IsNullOrEmpty())</div>
<div class="cl" style="left:68.7px;top:29px">            {</div>
<div class="cl" style="left:68.7px;top:41px">                sb.AppendLine(<span class="y">INV_SQL_COMMAND</span>.FILTERBY_SECURITYID);</div>
<div class="cl" style="left:68.7px;top:53px">                parameter.Add(<span class="s">"SECURITYLIST"</span>, pParentSecurityList);</div>
<div class="cl" style="left:68.7px;top:65px">            }</div>
<div class="cl" style="left:68.7px;top:89px">            <span class="k">var</span> lookup = <span class="k">new</span> <span class="y">Dictionary</span>&lt;<span class="k">int</span>, <span class="y">CorporateActionDTO</span>&gt;();</div>
<div class="cl" style="left:68.7px;top:101px">            connection.Query&lt;<span class="y">CorporateActionDTO</span>, <span class="y">CorporateDetailDTO</span>, <span class="y">CorporateActionDTO</span>&gt;(</div>
<div class="cl" style="left:68.7px;top:113px">                    sb.ToString()</div>
<div class="cl" style="left:68.7px;top:125px">                  , (CorporateAction, CorporateActionDetail) =&gt; {</div>
<div class="cl" style="left:68.7px;top:137px">                        <span class="y">CorporateActionDTO</span> CA;</div>
<div class="cl" style="left:68.7px;top:149px">                        <span class="k">if</span> (!lookup.TryGetValue((<span class="k">int</span>)CorporateAction.Id, <span class="k">out</span> CA))</div>
<div class="cl" style="left:68.7px;top:161px">                        {</div>
<div class="cl" style="left:68.7px;top:173px">                            lookup.Add((<span class="k">int</span>)CorporateAction.Id, CA = CorporateAction);</div>
<div class="cl" style="left:68.7px;top:185px">                        }</div>
<div class="cl" style="left:68.7px;top:197px">                        <span class="k">if</span> (CA.CorporateDetails == <span class="k">null</span>)</div>
<div class="cl" style="left:68.7px;top:209px">                        {</div>
<div class="cl" style="left:68.7px;top:221px">                            CA.CorporateDetails = <span class="k">new</span> <span class="y">List</span>&lt;<span class="y">CorporateDetailDTO</span>&gt;();</div>
<div class="cl" style="left:68.7px;top:233px">                        }</div>
<div class="cl" style="left:68.7px;top:245px">                        CA.CorporateDetails.Add(CorporateActionDetail);</div>
<div class="cl" style="left:68.7px;top:257px">                        <span class="k">return</span> CA;</div>
<div class="cl" style="left:68.7px;top:269px">                    }, parameter, splitOn: <span class="s">"CorporateDetailId"</span>).AsQueryable();</div>
<div class="cl" style="left:68.7px;top:281px">            <span class="k">var</span> resultList = lookup.Values;</div>
<div class="cl" style="left:68.7px;top:305px">        }</div>
<div class="cl" style="left:68.7px;top:329px">    }</div>
<div class="cl" style="left:68.7px;top:341px">}</div>
<div class="cl" style="left:68.7px;top:293px">            <span class="k">return</span> resultList.ToList<span class="f">&lt;</span><span class="fy">CorporateActionDTO</span><span class="f">&gt;</span>();</div>
</div>
<div class="abs" style="left:732px;top:95px;width:13.5px;height:352px;background:#e8e8e8"></div>
<div class="abs" style="left:732.5px;top:95px;width:13px;height:13px;background:#eaf0fb;border:1px solid #c8d2e6"></div>
<svg class="abs" style="left:735px;top:97px" width="8" height="9" viewBox="0 0 8 9"><path d="M0 3.6 H8 M0 5.6 H8" stroke="#1e1e1e" stroke-width="0.9"/><path d="M4 0 V3 M4 6.2 V9" stroke="#1e1e1e" stroke-width="1"/><path d="M2.6 1.6 L4 0.2 L5.4 1.6 M2.6 7.4 L4 8.8 L5.4 7.4" fill="none" stroke="#1e1e1e" stroke-width="0.9"/></svg>
<svg class="abs" style="left:735.5px;top:112px" width="6.5" height="4" viewBox="0 0 7 4"><path d="M0 4 L3.5 0 L7 4 Z" fill="#7d8399"/></svg>
<svg class="abs" style="left:735.5px;top:438.5px" width="6.5" height="4" viewBox="0 0 7 4"><path d="M0 0 L3.5 4 L7 0 Z" fill="#7d8399"/></svg>
<div class="abs" style="left:735.5px;top:285.5px;width:6.5px;height:74.5px;background:#c2c3c9"></div>
<div class="abs" style="left:737.5px;top:240.5px;width:3px;height:3px;background:#9a9a9a"></div>
<div class="abs" style="left:737.5px;top:313.5px;width:3px;height:3px;background:#8a8a8a"></div>
<div class="abs" style="left:732px;top:334.3px;width:13.5px;height:1.4px;background:#0000c8"></div>
<div class="abs" style="left:126px;top:447px;width:619.5px;height:13px;background:#e8e8e8"></div>
<div class="abs" style="left:127px;top:447.5px;width:44.5px;height:12px;background:#fff;border:1px solid #c5cbd9"></div>
<div class="t" style='left:128.5px;top:447.7px;color:#111;transform:scaleX(0.8225);'>100 %</div>
<svg class="abs" style="left:164px;top:453px" width="5" height="3" viewBox="0 0 5 3"><path d="M0 0 H5 L2.5 3 Z" fill="#1e1e1e"/></svg>
<svg class="abs" style="left:176px;top:450.5px" width="4" height="6.5" viewBox="0 0 4 7"><path d="M4 0 L0 3.5 L4 7 Z" fill="#7d8399"/></svg>
<svg class="abs" style="left:724px;top:450.5px" width="4" height="6.5" viewBox="0 0 4 7"><path d="M0 0 L4 3.5 L0 7 Z" fill="#7d8399"/></svg>
<div class="abs" style="left:184.2px;top:450.5px;width:199.5px;height:6.5px;background:#c2c3c9"></div>
<div class="hd" style="left:126px;top:465.3px;width:619.5px;height:16px"></div>
<div class="t" style='left:130px;top:467.8px;color:#fff;transform:scaleX(1.0173);'>Output</div>
<svg class="abs" style="left:709.3px;top:471.8px" width="6" height="3.5" viewBox="0 0 6 3.5"><path d="M0 0 H6 L3.0 3.5 Z" fill="#fff"/></svg>
<svg class="abs" style="left:721.8px;top:468.8px" width="6" height="9" viewBox="0 0 6 9"><path d="M1.5 0.6 H4.4 V5 H1.5 Z M0.3 5.3 H5.7 M3 5.3 V9" fill="none" stroke="#fff" stroke-width="0.8"/><path d="M3.9 0.6 V5" stroke="#fff" stroke-width="0.9"/></svg>
<svg class="abs" style="left:733.3px;top:469.8px" width="7" height="7" viewBox="0 0 7 7"><path d="M0.5 0.5 L6.5 6.5 M6.5 0.5 L0.5 6.5" stroke="#fff" stroke-width="1.05"/></svg>
<div class="tbar" style="left:126px;top:481.3px;width:619.5px;height:27px"></div>
<div class="t" style='left:131.8px;top:485.7px;transform:scaleX(1.0322);'>Show output from:</div>
<div class="abs" style="left:212px;top:484.5px;width:223.5px;height:13.5px;background:#fff;border:1px solid #dfe3ec"></div>
<div class="t" style='left:214.4px;top:485.7px;color:#111;transform:scaleX(0.9929);'>Solution</div>
<svg class="abs" style="left:428.8px;top:490.5px" width="5" height="3" viewBox="0 0 5 3"><path d="M0 0 H5 L2.5 3 Z" fill="#1e1e1e"/></svg>
<div class="abs" style="left:441px;top:485px;width:1px;height:13px;background:#8d99b0"></div>
<svg class="abs" style="left:448px;top:486px" width="10" height="10" viewBox="0 0 10 10"><path d="M2.6 4.6 H9.6 M2.6 6.8 H9.6 M2.6 9 H9.6" stroke="#b9bdcb" stroke-width="0.9"/><path d="M2.6 4 V0.8 M0.8 2.4 L2.6 0.6 L4.4 2.4" fill="none" stroke="#bfa9bb" stroke-width="0.9"/></svg>
<div class="abs" style="left:463.3px;top:485px;width:1px;height:13px;background:#8d99b0"></div>
<svg class="abs" style="left:470.6px;top:486.2px" width="9.6" height="9.6" viewBox="0 0 10 10"><path d="M2.4 5.2 H9.8 M2.4 7.6 H9.8" stroke="#3a3a3a" stroke-width="1.4"/><path d="M0 2.4 L2.6 0 V4.8 Z M2 2.4 H5.2" fill="#1c5aa0" stroke="#1c5aa0" stroke-width="1.1"/></svg>
<svg class="abs" style="left:487px;top:486.2px" width="9.6" height="9.6" viewBox="0 0 10 10"><path d="M2.4 5.2 H9.8 M2.4 7.6 H9.8" stroke="#3a3a3a" stroke-width="1.4"/><path d="M5.4 2.4 L2.8 0 V4.8 Z M0.2 2.4 H3.4" fill="#1c5aa0" stroke="#1c5aa0" stroke-width="1.1"/></svg>
<div class="abs" style="left:502.2px;top:485px;width:1px;height:13px;background:#8d99b0"></div>
<svg class="abs" style="left:509.6px;top:485.6px" width="10.4" height="11" viewBox="0 0 10.4 11"><path d="M6.4 1 H10.4 M6.4 3.4 H10.4 M1 6.2 H10.4 M1 8.4 H10.4 M1 10.6 H10.4" stroke="#3a3a3a" stroke-width="1.2"/><path d="M0.4 0.4 L5 5 M5 0.4 L0.4 5" stroke="#d3261f" stroke-width="1.4"/></svg>
<div class="abs" style="left:525px;top:485px;width:1px;height:13px;background:#8d99b0"></div>
<svg class="abs" style="left:531px;top:486.8px" width="11.4" height="9" viewBox="0 0 12 10"><path d="M0.4 1 H2.4 M0.4 2.8 H2.4 M3.4 1 H5.2 M3.4 2.8 H5.2 M0.4 5.6 H2 M0.4 7.4 H2" stroke="#424242" stroke-width="1"/><path d="M6.4 1.4 H11 V6.8 H5.4" fill="none" stroke="#1e1e1e" stroke-width="1.4"/><path d="M6.8 4.2 L3.8 6.8 L6.8 9.4 Z" fill="#1e1e1e"/></svg>
<div class="abs" style="left:126px;top:500.5px;width:619.5px;height:7.8px;background:#e8e8e8;overflow:hidden"><div class="abs" style="left:14px;top:3.7px;width:85px;height:5px;background:#c2c3c9"></div><svg class="abs" style="left:5px;top:3.2px" width="4" height="6.5" viewBox="0 0 4 7"><path d="M4 0 L0 3.5 L4 7 Z" fill="#7d8399"/></svg><svg class="abs" style="left:597.5px;top:3.2px" width="4" height="6.5" viewBox="0 0 4 7"><path d="M0 0 L4 3.5 L0 7 Z" fill="#7d8399"/></svg></div>
<div class="abs" style="left:126px;top:508.3px;width:199.5px;height:15.5px;background:#496182"></div>
<div class="t" style='left:129.5px;top:510.8px;color:#fff;transform:scaleX(0.9782);'>Pending Changes</div>
<div class="t" style='left:206px;top:510.8px;color:#fff;transform:scaleX(0.9585);'>Error List</div>
<div class="t" style='left:248.7px;top:510.8px;color:#fff;transform:scaleX(0.9658);'>Exception Settings</div>
<div class="abs" style="left:325px;top:508px;width:36.2px;height:15.4px;background:#fff"></div>
<div class="t" style='left:329.6px;top:510.6px;color:#111;transform:scaleX(1.0210);'>Output</div>
<div class="hd" style="left:751px;top:64px;width:268.2px"></div>
<div class="t" style='left:754.3px;top:66.6px;color:#fff;transform:scaleX(0.9701);'>Solution Explorer</div>
<svg class="abs" style="left:982.5px;top:71.0px" width="6" height="3.5" viewBox="0 0 6 3.5"><path d="M0 0 H6 L3.0 3.5 Z" fill="#fff"/></svg>
<svg class="abs" style="left:995.0px;top:68.0px" width="6" height="9" viewBox="0 0 6 9"><path d="M1.5 0.6 H4.4 V5 H1.5 Z M0.3 5.3 H5.7 M3 5.3 V9" fill="none" stroke="#fff" stroke-width="0.8"/><path d="M3.9 0.6 V5" stroke="#fff" stroke-width="0.9"/></svg>
<svg class="abs" style="left:1006.5px;top:69.0px" width="7" height="7" viewBox="0 0 7 7"><path d="M0.5 0.5 L6.5 6.5 M6.5 0.5 L0.5 6.5" stroke="#fff" stroke-width="1.05"/></svg>
<div class="tbar" style="left:751px;top:80px;width:268.2px;height:38.6px"></div>
<svg class="abs" style="left:758.5px;top:86.1px" width="9" height="9" viewBox="0 0 9 9"><circle cx="4.5" cy="4.5" r="4.4" fill="#b4b8c4"/><path d="M6.6 4.5 H2.6 M4.3 2.5 L2.2 4.5 L4.3 6.5" fill="none" stroke="#d3d8e4" stroke-width="1.3"/></svg>
<svg class="abs" style="left:774.5px;top:86.1px" width="9" height="9" viewBox="0 0 9 9"><circle cx="4.5" cy="4.5" r="4.4" fill="#b4b8c4"/><path d="M2.4 4.5 H6.4 M4.7 2.5 L6.8 4.5 L4.7 6.5" fill="none" stroke="#d3d8e4" stroke-width="1.3"/></svg>
<svg class="abs" style="left:789.5px;top:84.6px" width="12" height="11" viewBox="0 0 12 11"><path d="M6 1 L11.2 6 H9.6 V10.4 H7 V7.2 H5 V10.4 H2.4 V6 H0.8 Z" fill="#f4f4f4" stroke="#2b2b2b" stroke-width="1.1"/><path d="M8.6 1 H9.8 V3" stroke="#2b2b2b" stroke-width="1" fill="none"/></svg>
<svg class="abs" style="left:806px;top:84.6px" width="13" height="12" viewBox="0 0 13 12"><path d="M0.6 4.4 H5.4 L6.4 5.4 H9.4 V11 H0.6 Z" fill="#f0f0f0" stroke="#424242" stroke-width="1"/><path d="M3.4 1 H8.2 L9 1.8 H11.6 V6 H9.4" fill="#dcb67a" stroke="#c49a50" stroke-width="0.6"/><path d="M9.6 7.6 L11 9 L12.8 6.6" fill="none" stroke="#1c5aa0" stroke-width="1.1"/></svg>
<svg class="abs" style="left:822.5px;top:89.6px" width="5" height="3" viewBox="0 0 5 3"><path d="M0 0 H5 L2.5 3 Z" fill="#1e1e1e"/></svg>
<div class="abs" style="left:832px;top:83px;width:1px;height:17px;background:#8d99b0"></div>
<svg class="abs" style="left:839.5px;top:84.6px" width="12" height="12" viewBox="0 0 12 12"><circle cx="6.8" cy="7" r="3.6" fill="none" stroke="#424242" stroke-width="1.1"/><path d="M6.8 5 V7.2 H8.6" fill="none" stroke="#424242" stroke-width="0.9"/><path d="M0.2 0.6 H4.6 L2.4 3 Z" fill="#424242"/></svg>
<svg class="abs" style="left:855.5px;top:89.6px" width="5" height="3" viewBox="0 0 5 3"><path d="M0 0 H5 L2.5 3 Z" fill="#1e1e1e"/></svg>
<svg class="abs" style="left:865px;top:85.6px" width="10" height="10" viewBox="0 0 10 10"><path d="M2 2.8 H9.6 M0.4 7.2 H8" stroke="#2b2b2b" stroke-width="1.4"/><path d="M3.4 0.4 L0.6 2.8 L3.4 5.2 Z M6.6 4.8 L9.4 7.2 L6.6 9.6 Z" fill="#2b2b2b"/></svg>
<svg class="abs" style="left:882.5px;top:84.6px" width="10" height="11" viewBox="0 0 10 11"><path d="M7.9 3.8 A3.6 3.6 0 1 0 8.5 7.2" fill="none" stroke="#1c5aa0" stroke-width="1.9"/><path d="M4.6 0.2 H9.2 V4.8 Z" fill="#1c5aa0"/></svg>
<svg class="abs" style="left:898.5px;top:86.1px" width="10" height="9" viewBox="0 0 10 9"><path d="M2.8 2 V0.5 H9.5 V5.6 H7.6" fill="none" stroke="#424242" stroke-width="1"/><rect x="0.5" y="2.6" width="6.6" height="5.6" fill="#eef1f7" stroke="#424242" stroke-width="1"/><path d="M2 5.4 H5.6" stroke="#424242" stroke-width="1"/></svg>
<div class="abs" style="left:912px;top:82.3px;width:16.5px;height:17px;background:#fdf4bf;border:1px solid #e5c365"></div>
<svg class="abs" style="left:915px;top:85.1px" width="11" height="11" viewBox="0 0 11 11"><path d="M0.5 0.5 H5 L6.4 2 V7.6 H0.5 Z" fill="#f8f8f8" stroke="#424242" stroke-width="1"/><path d="M3.4 3 H8 L9.6 4.6 V10.5 H3.4 Z" fill="#f8f8f8" stroke="#424242" stroke-width="1"/><path d="M5 6 H8 M5 8 H8" stroke="#777" stroke-width="0.8"/></svg>
<div class="abs" style="left:931px;top:83px;width:1px;height:17px;background:#8d99b0"></div>
<svg class="abs" style="left:937.5px;top:87.6px" width="10" height="6" viewBox="0 0 10 6"><path d="M3.4 0.4 L0.8 3 L3.4 5.6 M6.6 0.4 L9.2 3 L6.6 5.6" fill="none" stroke="#2b2b2b" stroke-width="1.3"/></svg>
<svg class="abs" style="left:953px;top:85.1px" width="11" height="11" viewBox="0 0 11 11"><path d="M1 10 L5.6 5.2" stroke="#2b2b2b" stroke-width="2.2"/><path d="M6.2 0.8 C4.6 1.8 4.6 4.4 6 5.2 C7.4 6.4 9.8 5.8 10.4 4 L8.4 4.6 L6.8 3 L7.8 0.6 Z" fill="#2b2b2b"/></svg>
<div class="abs" style="left:969.5px;top:90.1px;width:7px;height:1.5px;background:#2b2b2b"></div><div class="abs" style="left:975.5px;top:89.1px;width:5.5px;height:3.2px;background:#2b2b2b"></div>
<div class="abs" style="left:751.5px;top:102px;width:267.2px;height:13.8px;background:#fff;border:1px solid #dfe3ec"></div>
<div class="t" style='left:755px;top:103.4px;color:#717171;transform:scaleX(0.9636);'>Search Solution Explorer (Ctrl+ว)</div>
<svg class="abs" style="left:997.5px;top:104.5px" width="9" height="9" viewBox="0 0 9 9"><circle cx="5.6" cy="3.4" r="2.5" fill="none" stroke="#424242" stroke-width="1.3"/><path d="M3.8 5.2 L0.7 8.3" stroke="#424242" stroke-width="1.6"/></svg>
<svg class="abs" style="left:1011px;top:108.5px" width="5" height="3" viewBox="0 0 5 3"><path d="M0 0 H5 L2.5 3 Z" fill="#424242"/></svg>
<div class="pane" style="left:751px;top:118.6px;width:255.5px;height:330.7px;overflow:hidden">
<div class="abs" style="left:0;top:150.4px;width:255.5px;height:13.5px;background:#cccedb"></div>
<svg class="abs" style="left:48.39999999999998px;top:6.650000000000006px" width="6" height="6" viewBox="0 0 6 6"><path d="M5.5 0.3 V5.5 H0.3 Z" fill="#1e1e1e"/></svg>
<svg class="abs" style="left:63.9px;top:3.9500000000000055px" width="10.6" height="9" viewBox="0 0 11 9"><path d="M0.4 1 H4 L5 2 H9.4 V8.6 H0.4 Z" fill="#e7d3a4"/><path d="M2.2 3.6 H11 L9.4 8.6 H0.4 Z" fill="#f3e4c0" stroke="#dcc48c" stroke-width="0.5"/></svg>
<div class="t" style='left:78.8px;top:3.25px;transform:scaleX(0.9657);'>Security</div>
<svg class="abs" style="left:62px;top:18.650000000000006px" width="5" height="8" viewBox="0 0 5 8"><path d="M0.6 0.8 L4.3 4 L0.6 7.2 Z" fill="none" stroke="#1e1e1e" stroke-width="1"/></svg>
<svg class="abs" style="left:77.79999999999995px;top:17.250000000000007px" width="10.6" height="8.8" viewBox="0 0 11 9"><path d="M0.3 0.6 H4.2 L5.2 1.8 H10.6 V8.7 H0.3 Z" fill="#dcb67a"/><path d="M0.3 2.6 H10.6 V8.7 H0.3 Z" fill="#e2c08a"/></svg>
<div class="t" style='left:92.6px;top:16.75px;transform:scaleX(0.9915);'>Cashflow</div>
<svg class="abs" style="left:62px;top:32.150000000000006px" width="5" height="8" viewBox="0 0 5 8"><path d="M0.6 0.8 L4.3 4 L0.6 7.2 Z" fill="none" stroke="#1e1e1e" stroke-width="1"/></svg>
<svg class="abs" style="left:77.79999999999995px;top:30.750000000000007px" width="10.6" height="8.8" viewBox="0 0 11 9"><path d="M0.3 0.6 H4.2 L5.2 1.8 H10.6 V8.7 H0.3 Z" fill="#dcb67a"/><path d="M0.3 2.6 H10.6 V8.7 H0.3 Z" fill="#e2c08a"/></svg>
<div class="t" style='left:92.6px;top:30.25px;transform:scaleX(1.0263);'>Impairment</div>
<svg class="abs" style="left:62px;top:45.650000000000006px" width="5" height="8" viewBox="0 0 5 8"><path d="M0.6 0.8 L4.3 4 L0.6 7.2 Z" fill="none" stroke="#1e1e1e" stroke-width="1"/></svg>
<svg class="abs" style="left:77.79999999999995px;top:44.25000000000001px" width="10.6" height="8.8" viewBox="0 0 11 9"><path d="M0.3 0.6 H4.2 L5.2 1.8 H10.6 V8.7 H0.3 Z" fill="#dcb67a"/><path d="M0.3 2.6 H10.6 V8.7 H0.3 Z" fill="#e2c08a"/></svg>
<div class="t" style='left:92.6px;top:43.75px;transform:scaleX(0.9849);'>Pricing</div>
<svg class="abs" style="left:62px;top:59.150000000000006px" width="5" height="8" viewBox="0 0 5 8"><path d="M0.6 0.8 L4.3 4 L0.6 7.2 Z" fill="none" stroke="#1e1e1e" stroke-width="1"/></svg>
<svg class="abs" style="left:71.5px;top:59.150000000000006px" width="7" height="7" viewBox="0 0 7 7"><path d="M0.6 3.8 L2.6 5.8 L6.2 0.8" fill="none" stroke="#3a78cf" stroke-width="1.2"/></svg><svg class="abs" style="left:78.5px;top:59.650000000000006px" width="10" height="7" viewBox="0 0 10 7"><path d="M4.6 1.6 C3.6 0.5 0.8 0.7 0.8 3.5 C0.8 6.3 3.6 6.5 4.6 5.4" fill="none" stroke="#3f9a3b" stroke-width="1.35"/><path d="M6 1.4 H9.4 V5.2 H6 Z" fill="#3f9a3b"/><path d="M6 3.3 H9.6 M7.8 1.2 V5.4" stroke="#f8f8f8" stroke-width="0.7"/></svg>
<div class="t" style='left:92.6px;top:57.25px;transform:scaleX(0.9154);'>AssetClassADO.cs</div>
<svg class="abs" style="left:62px;top:72.65px" width="5" height="8" viewBox="0 0 5 8"><path d="M0.6 0.8 L4.3 4 L0.6 7.2 Z" fill="none" stroke="#1e1e1e" stroke-width="1"/></svg>
<svg class="abs" style="left:71.5px;top:72.65px" width="7" height="7" viewBox="0 0 7 7"><path d="M0.6 3.8 L2.6 5.8 L6.2 0.8" fill="none" stroke="#3a78cf" stroke-width="1.2"/></svg><svg class="abs" style="left:78.5px;top:73.15px" width="10" height="7" viewBox="0 0 10 7"><path d="M4.6 1.6 C3.6 0.5 0.8 0.7 0.8 3.5 C0.8 6.3 3.6 6.5 4.6 5.4" fill="none" stroke="#3f9a3b" stroke-width="1.35"/><path d="M6 1.4 H9.4 V5.2 H6 Z" fill="#3f9a3b"/><path d="M6 3.3 H9.6 M7.8 1.2 V5.4" stroke="#f8f8f8" stroke-width="0.7"/></svg>
<div class="t" style='left:92.6px;top:70.75px;transform:scaleX(0.9405);'>CashSecurityADO.cs</div>
<svg class="abs" style="left:62px;top:86.15px" width="5" height="8" viewBox="0 0 5 8"><path d="M0.6 0.8 L4.3 4 L0.6 7.2 Z" fill="none" stroke="#1e1e1e" stroke-width="1"/></svg>
<svg class="abs" style="left:71.5px;top:86.15px" width="7" height="7" viewBox="0 0 7 7"><path d="M0.6 3.8 L2.6 5.8 L6.2 0.8" fill="none" stroke="#3a78cf" stroke-width="1.2"/></svg><svg class="abs" style="left:78.5px;top:86.65px" width="10" height="7" viewBox="0 0 10 7"><path d="M4.6 1.6 C3.6 0.5 0.8 0.7 0.8 3.5 C0.8 6.3 3.6 6.5 4.6 5.4" fill="none" stroke="#3f9a3b" stroke-width="1.35"/><path d="M6 1.4 H9.4 V5.2 H6 Z" fill="#3f9a3b"/><path d="M6 3.3 H9.6 M7.8 1.2 V5.4" stroke="#f8f8f8" stroke-width="0.7"/></svg>
<div class="t" style='left:92.6px;top:84.25px;transform:scaleX(0.9503);'>CashSecurityDetailADO.cs</div>
<svg class="abs" style="left:62px;top:99.65px" width="5" height="8" viewBox="0 0 5 8"><path d="M0.6 0.8 L4.3 4 L0.6 7.2 Z" fill="none" stroke="#1e1e1e" stroke-width="1"/></svg>
<svg class="abs" style="left:71.5px;top:99.65px" width="7" height="7" viewBox="0 0 7 7"><path d="M0.6 3.8 L2.6 5.8 L6.2 0.8" fill="none" stroke="#3a78cf" stroke-width="1.2"/></svg><svg class="abs" style="left:78.5px;top:100.15px" width="10" height="7" viewBox="0 0 10 7"><path d="M4.6 1.6 C3.6 0.5 0.8 0.7 0.8 3.5 C0.8 6.3 3.6 6.5 4.6 5.4" fill="none" stroke="#3f9a3b" stroke-width="1.35"/><path d="M6 1.4 H9.4 V5.2 H6 Z" fill="#3f9a3b"/><path d="M6 3.3 H9.6 M7.8 1.2 V5.4" stroke="#f8f8f8" stroke-width="0.7"/></svg>
<div class="t" style='left:92.6px;top:97.75px;transform:scaleX(0.9530);'>CashSecurityGroupADO.cs</div>
<svg class="abs" style="left:62px;top:113.15px" width="5" height="8" viewBox="0 0 5 8"><path d="M0.6 0.8 L4.3 4 L0.6 7.2 Z" fill="none" stroke="#1e1e1e" stroke-width="1"/></svg>
<svg class="abs" style="left:71.5px;top:113.15px" width="7" height="7" viewBox="0 0 7 7"><path d="M0.6 3.8 L2.6 5.8 L6.2 0.8" fill="none" stroke="#3a78cf" stroke-width="1.2"/></svg><svg class="abs" style="left:78.5px;top:113.65px" width="10" height="7" viewBox="0 0 10 7"><path d="M4.6 1.6 C3.6 0.5 0.8 0.7 0.8 3.5 C0.8 6.3 3.6 6.5 4.6 5.4" fill="none" stroke="#3f9a3b" stroke-width="1.35"/><path d="M6 1.4 H9.4 V5.2 H6 Z" fill="#3f9a3b"/><path d="M6 3.3 H9.6 M7.8 1.2 V5.4" stroke="#f8f8f8" stroke-width="0.7"/></svg>
<div class="t" style='left:92.6px;top:111.25px;transform:scaleX(0.9331);'>CashTransferADO.cs</div>
<svg class="abs" style="left:62px;top:126.65px" width="5" height="8" viewBox="0 0 5 8"><path d="M0.6 0.8 L4.3 4 L0.6 7.2 Z" fill="none" stroke="#1e1e1e" stroke-width="1"/></svg>
<svg class="abs" style="left:71.5px;top:126.65px" width="7" height="7" viewBox="0 0 7 7"><path d="M0.6 3.8 L2.6 5.8 L6.2 0.8" fill="none" stroke="#3a78cf" stroke-width="1.2"/></svg><svg class="abs" style="left:78.5px;top:127.15px" width="10" height="7" viewBox="0 0 10 7"><path d="M4.6 1.6 C3.6 0.5 0.8 0.7 0.8 3.5 C0.8 6.3 3.6 6.5 4.6 5.4" fill="none" stroke="#3f9a3b" stroke-width="1.35"/><path d="M6 1.4 H9.4 V5.2 H6 Z" fill="#3f9a3b"/><path d="M6 3.3 H9.6 M7.8 1.2 V5.4" stroke="#f8f8f8" stroke-width="0.7"/></svg>
<div class="t" style='left:92.6px;top:124.75px;transform:scaleX(0.9643);'>CashTransferPortfolioADO.cs</div>
<svg class="abs" style="left:62px;top:140.15px" width="5" height="8" viewBox="0 0 5 8"><path d="M0.6 0.8 L4.3 4 L0.6 7.2 Z" fill="none" stroke="#1e1e1e" stroke-width="1"/></svg>
<svg class="abs" style="left:71.5px;top:140.15px" width="7" height="7" viewBox="0 0 7 7"><path d="M0.6 3.8 L2.6 5.8 L6.2 0.8" fill="none" stroke="#3a78cf" stroke-width="1.2"/></svg><svg class="abs" style="left:78.5px;top:140.65px" width="10" height="7" viewBox="0 0 10 7"><path d="M4.6 1.6 C3.6 0.5 0.8 0.7 0.8 3.5 C0.8 6.3 3.6 6.5 4.6 5.4" fill="none" stroke="#3f9a3b" stroke-width="1.35"/><path d="M6 1.4 H9.4 V5.2 H6 Z" fill="#3f9a3b"/><path d="M6 3.3 H9.6 M7.8 1.2 V5.4" stroke="#f8f8f8" stroke-width="0.7"/></svg>
<div class="t" style='left:92.6px;top:138.25px;transform:scaleX(0.9431);'>CashTransferSecurityADO.cs</div>
<svg class="abs" style="left:62px;top:153.65px" width="5" height="8" viewBox="0 0 5 8"><path d="M0.6 0.8 L4.3 4 L0.6 7.2 Z" fill="none" stroke="#1e1e1e" stroke-width="1"/></svg>
<svg class="abs" style="left:71.5px;top:153.65px" width="7" height="7" viewBox="0 0 7 7"><path d="M0.6 3.8 L2.6 5.8 L6.2 0.8" fill="none" stroke="#3a78cf" stroke-width="1.2"/></svg><svg class="abs" style="left:78.5px;top:154.15px" width="10" height="7" viewBox="0 0 10 7"><path d="M4.6 1.6 C3.6 0.5 0.8 0.7 0.8 3.5 C0.8 6.3 3.6 6.5 4.6 5.4" fill="none" stroke="#3f9a3b" stroke-width="1.35"/><path d="M6 1.4 H9.4 V5.2 H6 Z" fill="#3f9a3b"/><path d="M6 3.3 H9.6 M7.8 1.2 V5.4" stroke="#f8f8f8" stroke-width="0.7"/></svg>
<div class="t" style='left:92.6px;top:151.75px;transform:scaleX(0.9839);'>CorporateActionADO.cs</div>
<svg class="abs" style="left:62px;top:167.15px" width="5" height="8" viewBox="0 0 5 8"><path d="M0.6 0.8 L4.3 4 L0.6 7.2 Z" fill="none" stroke="#1e1e1e" stroke-width="1"/></svg>
<svg class="abs" style="left:71.5px;top:167.15px" width="7" height="7" viewBox="0 0 7 7"><path d="M0.6 3.8 L2.6 5.8 L6.2 0.8" fill="none" stroke="#3a78cf" stroke-width="1.2"/></svg><svg class="abs" style="left:78.5px;top:167.65px" width="10" height="7" viewBox="0 0 10 7"><path d="M4.6 1.6 C3.6 0.5 0.8 0.7 0.8 3.5 C0.8 6.3 3.6 6.5 4.6 5.4" fill="none" stroke="#3f9a3b" stroke-width="1.35"/><path d="M6 1.4 H9.4 V5.2 H6 Z" fill="#3f9a3b"/><path d="M6 3.3 H9.6 M7.8 1.2 V5.4" stroke="#f8f8f8" stroke-width="0.7"/></svg>
<div class="t" style='left:92.6px;top:165.25px;transform:scaleX(0.9665);'>CorporateDetailADO.cs</div>
<svg class="abs" style="left:62px;top:180.65px" width="5" height="8" viewBox="0 0 5 8"><path d="M0.6 0.8 L4.3 4 L0.6 7.2 Z" fill="none" stroke="#1e1e1e" stroke-width="1"/></svg>
<svg class="abs" style="left:71.5px;top:180.65px" width="7" height="7" viewBox="0 0 7 7"><path d="M0.6 3.8 L2.6 5.8 L6.2 0.8" fill="none" stroke="#3a78cf" stroke-width="1.2"/></svg><svg class="abs" style="left:78.5px;top:181.15px" width="10" height="7" viewBox="0 0 10 7"><path d="M4.6 1.6 C3.6 0.5 0.8 0.7 0.8 3.5 C0.8 6.3 3.6 6.5 4.6 5.4" fill="none" stroke="#3f9a3b" stroke-width="1.35"/><path d="M6 1.4 H9.4 V5.2 H6 Z" fill="#3f9a3b"/><path d="M6 3.3 H9.6 M7.8 1.2 V5.4" stroke="#f8f8f8" stroke-width="0.7"/></svg>
<div class="t" style='left:92.6px;top:178.75px;transform:scaleX(0.9553);'>CurrencyADO.cs</div>
<svg class="abs" style="left:62px;top:194.15px" width="5" height="8" viewBox="0 0 5 8"><path d="M0.6 0.8 L4.3 4 L0.6 7.2 Z" fill="none" stroke="#1e1e1e" stroke-width="1"/></svg>
<svg class="abs" style="left:71.5px;top:194.15px" width="7" height="7" viewBox="0 0 7 7"><path d="M0.6 3.8 L2.6 5.8 L6.2 0.8" fill="none" stroke="#3a78cf" stroke-width="1.2"/></svg><svg class="abs" style="left:78.5px;top:194.65px" width="10" height="7" viewBox="0 0 10 7"><path d="M4.6 1.6 C3.6 0.5 0.8 0.7 0.8 3.5 C0.8 6.3 3.6 6.5 4.6 5.4" fill="none" stroke="#3f9a3b" stroke-width="1.35"/><path d="M6 1.4 H9.4 V5.2 H6 Z" fill="#3f9a3b"/><path d="M6 3.3 H9.6 M7.8 1.2 V5.4" stroke="#f8f8f8" stroke-width="0.7"/></svg>
<div class="t" style='left:92.6px;top:192.25px;transform:scaleX(0.9517);'>CurrencyPairADO.cs</div>
<svg class="abs" style="left:62px;top:207.65px" width="5" height="8" viewBox="0 0 5 8"><path d="M0.6 0.8 L4.3 4 L0.6 7.2 Z" fill="none" stroke="#1e1e1e" stroke-width="1"/></svg>
<svg class="abs" style="left:71.5px;top:207.65px" width="7" height="7" viewBox="0 0 7 7"><path d="M0.6 3.8 L2.6 5.8 L6.2 0.8" fill="none" stroke="#3a78cf" stroke-width="1.2"/></svg><svg class="abs" style="left:78.5px;top:208.15px" width="10" height="7" viewBox="0 0 10 7"><path d="M4.6 1.6 C3.6 0.5 0.8 0.7 0.8 3.5 C0.8 6.3 3.6 6.5 4.6 5.4" fill="none" stroke="#3f9a3b" stroke-width="1.35"/><path d="M6 1.4 H9.4 V5.2 H6 Z" fill="#3f9a3b"/><path d="M6 3.3 H9.6 M7.8 1.2 V5.4" stroke="#f8f8f8" stroke-width="0.7"/></svg>
<div class="t" style='left:92.6px;top:205.75px;transform:scaleX(0.9548);'>EquityADO.cs</div>
<svg class="abs" style="left:62px;top:221.15px" width="5" height="8" viewBox="0 0 5 8"><path d="M0.6 0.8 L4.3 4 L0.6 7.2 Z" fill="none" stroke="#1e1e1e" stroke-width="1"/></svg>
<svg class="abs" style="left:71.5px;top:221.15px" width="7" height="7" viewBox="0 0 7 7"><path d="M0.6 3.8 L2.6 5.8 L6.2 0.8" fill="none" stroke="#3a78cf" stroke-width="1.2"/></svg><svg class="abs" style="left:78.5px;top:221.65px" width="10" height="7" viewBox="0 0 10 7"><path d="M4.6 1.6 C3.6 0.5 0.8 0.7 0.8 3.5 C0.8 6.3 3.6 6.5 4.6 5.4" fill="none" stroke="#3f9a3b" stroke-width="1.35"/><path d="M6 1.4 H9.4 V5.2 H6 Z" fill="#3f9a3b"/><path d="M6 3.3 H9.6 M7.8 1.2 V5.4" stroke="#f8f8f8" stroke-width="0.7"/></svg>
<div class="t" style='left:92.6px;top:219.25px;transform:scaleX(0.9506);'>EquityTypeADO.cs</div>
<svg class="abs" style="left:62px;top:234.65px" width="5" height="8" viewBox="0 0 5 8"><path d="M0.6 0.8 L4.3 4 L0.6 7.2 Z" fill="none" stroke="#1e1e1e" stroke-width="1"/></svg>
<svg class="abs" style="left:71.5px;top:234.65px" width="7" height="7" viewBox="0 0 7 7"><path d="M0.6 3.8 L2.6 5.8 L6.2 0.8" fill="none" stroke="#3a78cf" stroke-width="1.2"/></svg><svg class="abs" style="left:78.5px;top:235.15px" width="10" height="7" viewBox="0 0 10 7"><path d="M4.6 1.6 C3.6 0.5 0.8 0.7 0.8 3.5 C0.8 6.3 3.6 6.5 4.6 5.4" fill="none" stroke="#3f9a3b" stroke-width="1.35"/><path d="M6 1.4 H9.4 V5.2 H6 Z" fill="#3f9a3b"/><path d="M6 3.3 H9.6 M7.8 1.2 V5.4" stroke="#f8f8f8" stroke-width="0.7"/></svg>
<div class="t" style='left:92.6px;top:232.75px;transform:scaleX(0.9617);'>FinalFormularADO.cs</div>
<svg class="abs" style="left:62px;top:248.15px" width="5" height="8" viewBox="0 0 5 8"><path d="M0.6 0.8 L4.3 4 L0.6 7.2 Z" fill="none" stroke="#1e1e1e" stroke-width="1"/></svg>
<svg class="abs" style="left:71.5px;top:248.15px" width="7" height="7" viewBox="0 0 7 7"><path d="M0.6 3.8 L2.6 5.8 L6.2 0.8" fill="none" stroke="#3a78cf" stroke-width="1.2"/></svg><svg class="abs" style="left:78.5px;top:248.65px" width="10" height="7" viewBox="0 0 10 7"><path d="M4.6 1.6 C3.6 0.5 0.8 0.7 0.8 3.5 C0.8 6.3 3.6 6.5 4.6 5.4" fill="none" stroke="#3f9a3b" stroke-width="1.35"/><path d="M6 1.4 H9.4 V5.2 H6 Z" fill="#3f9a3b"/><path d="M6 3.3 H9.6 M7.8 1.2 V5.4" stroke="#f8f8f8" stroke-width="0.7"/></svg>
<div class="t" style='left:92.6px;top:246.25px;transform:scaleX(0.9548);'>FixedIncomeADO.cs</div>
<svg class="abs" style="left:62px;top:261.65px" width="5" height="8" viewBox="0 0 5 8"><path d="M0.6 0.8 L4.3 4 L0.6 7.2 Z" fill="none" stroke="#1e1e1e" stroke-width="1"/></svg>
<svg class="abs" style="left:71.5px;top:261.65px" width="7" height="7" viewBox="0 0 7 7"><path d="M0.6 3.8 L2.6 5.8 L6.2 0.8" fill="none" stroke="#3a78cf" stroke-width="1.2"/></svg><svg class="abs" style="left:78.5px;top:262.15px" width="10" height="7" viewBox="0 0 10 7"><path d="M4.6 1.6 C3.6 0.5 0.8 0.7 0.8 3.5 C0.8 6.3 3.6 6.5 4.6 5.4" fill="none" stroke="#3f9a3b" stroke-width="1.35"/><path d="M6 1.4 H9.4 V5.2 H6 Z" fill="#3f9a3b"/><path d="M6 3.3 H9.6 M7.8 1.2 V5.4" stroke="#f8f8f8" stroke-width="0.7"/></svg>
<div class="t" style='left:92.6px;top:259.75px;transform:scaleX(0.9625);'>FormularADO.cs</div>
<svg class="abs" style="left:62px;top:275.15px" width="5" height="8" viewBox="0 0 5 8"><path d="M0.6 0.8 L4.3 4 L0.6 7.2 Z" fill="none" stroke="#1e1e1e" stroke-width="1"/></svg>
<svg class="abs" style="left:71.5px;top:275.15px" width="7" height="7" viewBox="0 0 7 7"><path d="M0.6 3.8 L2.6 5.8 L6.2 0.8" fill="none" stroke="#3a78cf" stroke-width="1.2"/></svg><svg class="abs" style="left:78.5px;top:275.65px" width="10" height="7" viewBox="0 0 10 7"><path d="M4.6 1.6 C3.6 0.5 0.8 0.7 0.8 3.5 C0.8 6.3 3.6 6.5 4.6 5.4" fill="none" stroke="#3f9a3b" stroke-width="1.35"/><path d="M6 1.4 H9.4 V5.2 H6 Z" fill="#3f9a3b"/><path d="M6 3.3 H9.6 M7.8 1.2 V5.4" stroke="#f8f8f8" stroke-width="0.7"/></svg>
<div class="t" style='left:92.6px;top:273.25px;transform:scaleX(0.9412);'>FuturesADO.cs</div>
<svg class="abs" style="left:62px;top:288.65px" width="5" height="8" viewBox="0 0 5 8"><path d="M0.6 0.8 L4.3 4 L0.6 7.2 Z" fill="none" stroke="#1e1e1e" stroke-width="1"/></svg>
<svg class="abs" style="left:71.5px;top:288.65px" width="7" height="7" viewBox="0 0 7 7"><path d="M0.6 3.8 L2.6 5.8 L6.2 0.8" fill="none" stroke="#3a78cf" stroke-width="1.2"/></svg><svg class="abs" style="left:78.5px;top:289.15px" width="10" height="7" viewBox="0 0 10 7"><path d="M4.6 1.6 C3.6 0.5 0.8 0.7 0.8 3.5 C0.8 6.3 3.6 6.5 4.6 5.4" fill="none" stroke="#3f9a3b" stroke-width="1.35"/><path d="M6 1.4 H9.4 V5.2 H6 Z" fill="#3f9a3b"/><path d="M6 3.3 H9.6 M7.8 1.2 V5.4" stroke="#f8f8f8" stroke-width="0.7"/></svg>
<div class="t" style='left:92.6px;top:286.75px;transform:scaleX(0.9470);'>IndexSecurityADO.cs</div>
<svg class="abs" style="left:62px;top:302.15px" width="5" height="8" viewBox="0 0 5 8"><path d="M0.6 0.8 L4.3 4 L0.6 7.2 Z" fill="none" stroke="#1e1e1e" stroke-width="1"/></svg>
<svg class="abs" style="left:71.5px;top:302.15px" width="7" height="7" viewBox="0 0 7 7"><path d="M0.6 3.8 L2.6 5.8 L6.2 0.8" fill="none" stroke="#3a78cf" stroke-width="1.2"/></svg><svg class="abs" style="left:78.5px;top:302.65px" width="10" height="7" viewBox="0 0 10 7"><path d="M4.6 1.6 C3.6 0.5 0.8 0.7 0.8 3.5 C0.8 6.3 3.6 6.5 4.6 5.4" fill="none" stroke="#3f9a3b" stroke-width="1.35"/><path d="M6 1.4 H9.4 V5.2 H6 Z" fill="#3f9a3b"/><path d="M6 3.3 H9.6 M7.8 1.2 V5.4" stroke="#f8f8f8" stroke-width="0.7"/></svg>
<div class="t" style='left:92.6px;top:300.25px;transform:scaleX(0.9676);'>InvestmentADO.cs</div>
<svg class="abs" style="left:62px;top:315.65px" width="5" height="8" viewBox="0 0 5 8"><path d="M0.6 0.8 L4.3 4 L0.6 7.2 Z" fill="none" stroke="#1e1e1e" stroke-width="1"/></svg>
<svg class="abs" style="left:71.5px;top:315.65px" width="7" height="7" viewBox="0 0 7 7"><path d="M0.6 3.8 L2.6 5.8 L6.2 0.8" fill="none" stroke="#3a78cf" stroke-width="1.2"/></svg><svg class="abs" style="left:78.5px;top:316.15px" width="10" height="7" viewBox="0 0 10 7"><path d="M4.6 1.6 C3.6 0.5 0.8 0.7 0.8 3.5 C0.8 6.3 3.6 6.5 4.6 5.4" fill="none" stroke="#3f9a3b" stroke-width="1.35"/><path d="M6 1.4 H9.4 V5.2 H6 Z" fill="#3f9a3b"/><path d="M6 3.3 H9.6 M7.8 1.2 V5.4" stroke="#f8f8f8" stroke-width="0.7"/></svg>
<div class="t" style='left:92.6px;top:313.75px;transform:scaleX(0.9794);'>MainCashAccountADO.cs</div>
<svg class="abs" style="left:62px;top:329.15px" width="5" height="8" viewBox="0 0 5 8"><path d="M0.6 0.8 L4.3 4 L0.6 7.2 Z" fill="none" stroke="#1e1e1e" stroke-width="1"/></svg>
<svg class="abs" style="left:71.5px;top:329.15px" width="7" height="7" viewBox="0 0 7 7"><path d="M0.6 3.8 L2.6 5.8 L6.2 0.8" fill="none" stroke="#3a78cf" stroke-width="1.2"/></svg><svg class="abs" style="left:78.5px;top:329.65px" width="10" height="7" viewBox="0 0 10 7"><path d="M4.6 1.6 C3.6 0.5 0.8 0.7 0.8 3.5 C0.8 6.3 3.6 6.5 4.6 5.4" fill="none" stroke="#3f9a3b" stroke-width="1.35"/><path d="M6 1.4 H9.4 V5.2 H6 Z" fill="#3f9a3b"/><path d="M6 3.3 H9.6 M7.8 1.2 V5.4" stroke="#f8f8f8" stroke-width="0.7"/></svg>
<div class="t" style='left:92.6px;top:327.25px;'>OptionsADO.cs</div>
</div>
<div class="abs" style="left:1006.5px;top:118.6px;width:12.7px;height:330.7px;background:#e8e8e8"></div>
<svg class="abs" style="left:1009.3px;top:124.5px" width="6.5" height="4" viewBox="0 0 7 4"><path d="M0 4 L3.5 0 L7 4 Z" fill="#7d8399"/></svg>
<svg class="abs" style="left:1009.3px;top:440.5px" width="6.5" height="4" viewBox="0 0 7 4"><path d="M0 0 L3.5 4 L7 0 Z" fill="#7d8399"/></svg>
<div class="abs" style="left:1009.3px;top:175px;width:6.5px;height:24px;background:#c2c3c9"></div>
<div class="abs" style="left:751px;top:449.3px;width:74.6px;height:15.2px;background:#fff"></div>
<div class="t" style='left:755px;top:450.8px;color:#111;transform:scaleX(0.9628);'>Solution Explorer</div>
<div class="abs" style="left:825.9px;top:449.9px;width:63.1px;height:14.8px;background:#496182"></div>
<div class="t" style='left:830.5px;top:451.2px;color:#fff;transform:scaleX(0.9391);'>Team Explorer</div>
<div class="hd" style="left:751px;top:469.7px;width:268.2px;height:16.4px"></div>
<div class="t" style='left:754.8px;top:472.6px;color:#fff;transform:scaleX(0.9801);'>Source Control Info</div>
<svg class="abs" style="left:983px;top:476.8px" width="6" height="3.5" viewBox="0 0 6 3.5"><path d="M0 0 H6 L3.0 3.5 Z" fill="#fff"/></svg>
<svg class="abs" style="left:995.5px;top:473.8px" width="6" height="9" viewBox="0 0 6 9"><path d="M1.5 0.6 H4.4 V5 H1.5 Z M0.3 5.3 H5.7 M3 5.3 V9" fill="none" stroke="#fff" stroke-width="0.8"/><path d="M3.9 0.6 V5" stroke="#fff" stroke-width="0.9"/></svg>
<svg class="abs" style="left:1007px;top:474.8px" width="7" height="7" viewBox="0 0 7 7"><path d="M0.5 0.5 L6.5 6.5 M6.5 0.5 L0.5 6.5" stroke="#fff" stroke-width="1.05"/></svg>
<div class="tbar" style="left:751px;top:486px;width:268.2px;height:22.6px;overflow:hidden"><div class="abs" style="left:3.5px;top:19.8px;width:16px;height:4px;background:#f6e9a6;border:1px solid #d8c271"></div><div class="abs" style="left:24px;top:21.6px;width:30px;height:1px;background:#a3a9b8"></div></div>
<div class="abs" style="left:756.7px;top:489px;width:256.7px;height:12.2px;background:#fff;border:0.6px solid #e3e7f0"></div>
<div class="t" style='left:759.6px;top:489.2px;color:#111;transform:scaleX(0.9829);'>CorporateActionADO.cs</div>
<svg class="abs" style="left:1005.5px;top:494px" width="5" height="3" viewBox="0 0 5 3"><path d="M0 0 H5 L2.5 3 Z" fill="#1e1e1e"/></svg>
<div class="abs" style="left:751px;top:508.4px;width:84.8px;height:15px;background:#fff"></div>
<div class="t" style='left:754.6px;top:509.6px;color:#111;transform:scaleX(0.9801);'>Source Control Info</div>
<div class="abs" style="left:836.2px;top:509px;width:47.6px;height:14.4px;background:#496182"></div>
<div class="t" style='left:840.5px;top:510.1px;color:#fff;transform:scaleX(0.9383);'>Properties</div>
<div class="abs" style="left:967px;top:516px;width:50.3px;height:13.4px;background:#000"></div>
<svg class="abs" style="left:967.3px;top:516.2px" width="13" height="13" viewBox="0 0 13 13"><g fill="#fff"><circle cx="6.5" cy="6.5" r="4.6"/><rect x="5.4" y="0" width="2.2" height="13"/><rect x="0" y="5.4" width="13" height="2.2"/><rect x="5.4" y="0" width="2.2" height="13" transform="rotate(45 6.5 6.5)"/><rect x="5.4" y="0" width="2.2" height="13" transform="rotate(-45 6.5 6.5)"/></g><circle cx="6.5" cy="6.5" r="3.2" fill="#000"/></svg>
<div class="t" style='left:972.2px;top:516.8px;font-size:5.6px;color:#fff;font-weight:700;transform:scaleX(0.8402);'>D</div>
<div class="t" style='left:979.3px;top:516.5px;font-size:6.6px;color:#fff;font-weight:700;transform:scaleX(0.8827);'>ebuggingSoft</div>
<div class="t" style='left:980.5px;top:521.6px;font-size:2.8px;color:#ddd;transform:scaleX(1.1986);'>software &amp; technology</div>
<div id="status" class="abs"></div>
<div class="t" style='left:3.5px;top:531.6px;color:#fff;transform:scaleX(0.8841);'>Ready</div>
<div class="t" style='left:454.5px;top:531.6px;color:#fff;transform:scaleX(0.9542);'>Ln 86</div>
<div class="t" style='left:523.5px;top:531.6px;color:#fff;transform:scaleX(0.9610);'>Col 26</div>
<div class="t" style='left:592.5px;top:531.6px;color:#fff;transform:scaleX(0.9571);'>Ch 26</div>
<div class="t" style='left:694.5px;top:531.6px;color:#fff;transform:scaleX(0.8658);'>INS</div>
<svg class="abs" style="left:898.5px;top:533px" width="7" height="9" viewBox="0 0 7 9"><path d="M3.5 9 V1 M0.5 4 L3.5 0.8 L6.5 4" fill="none" stroke="#fff" stroke-width="1.3"/></svg>
<div class="t" style='left:913.8px;top:531.6px;color:#fff;transform:scaleX(1.0004);'>Add to Source Control</div>
<svg class="abs" style="left:1008px;top:535.5px" width="5" height="3" viewBox="0 0 5 3"><path d="M0 3 L2.5 0 L5 3 Z" fill="#fff"/></svg>
</body>
</html>
